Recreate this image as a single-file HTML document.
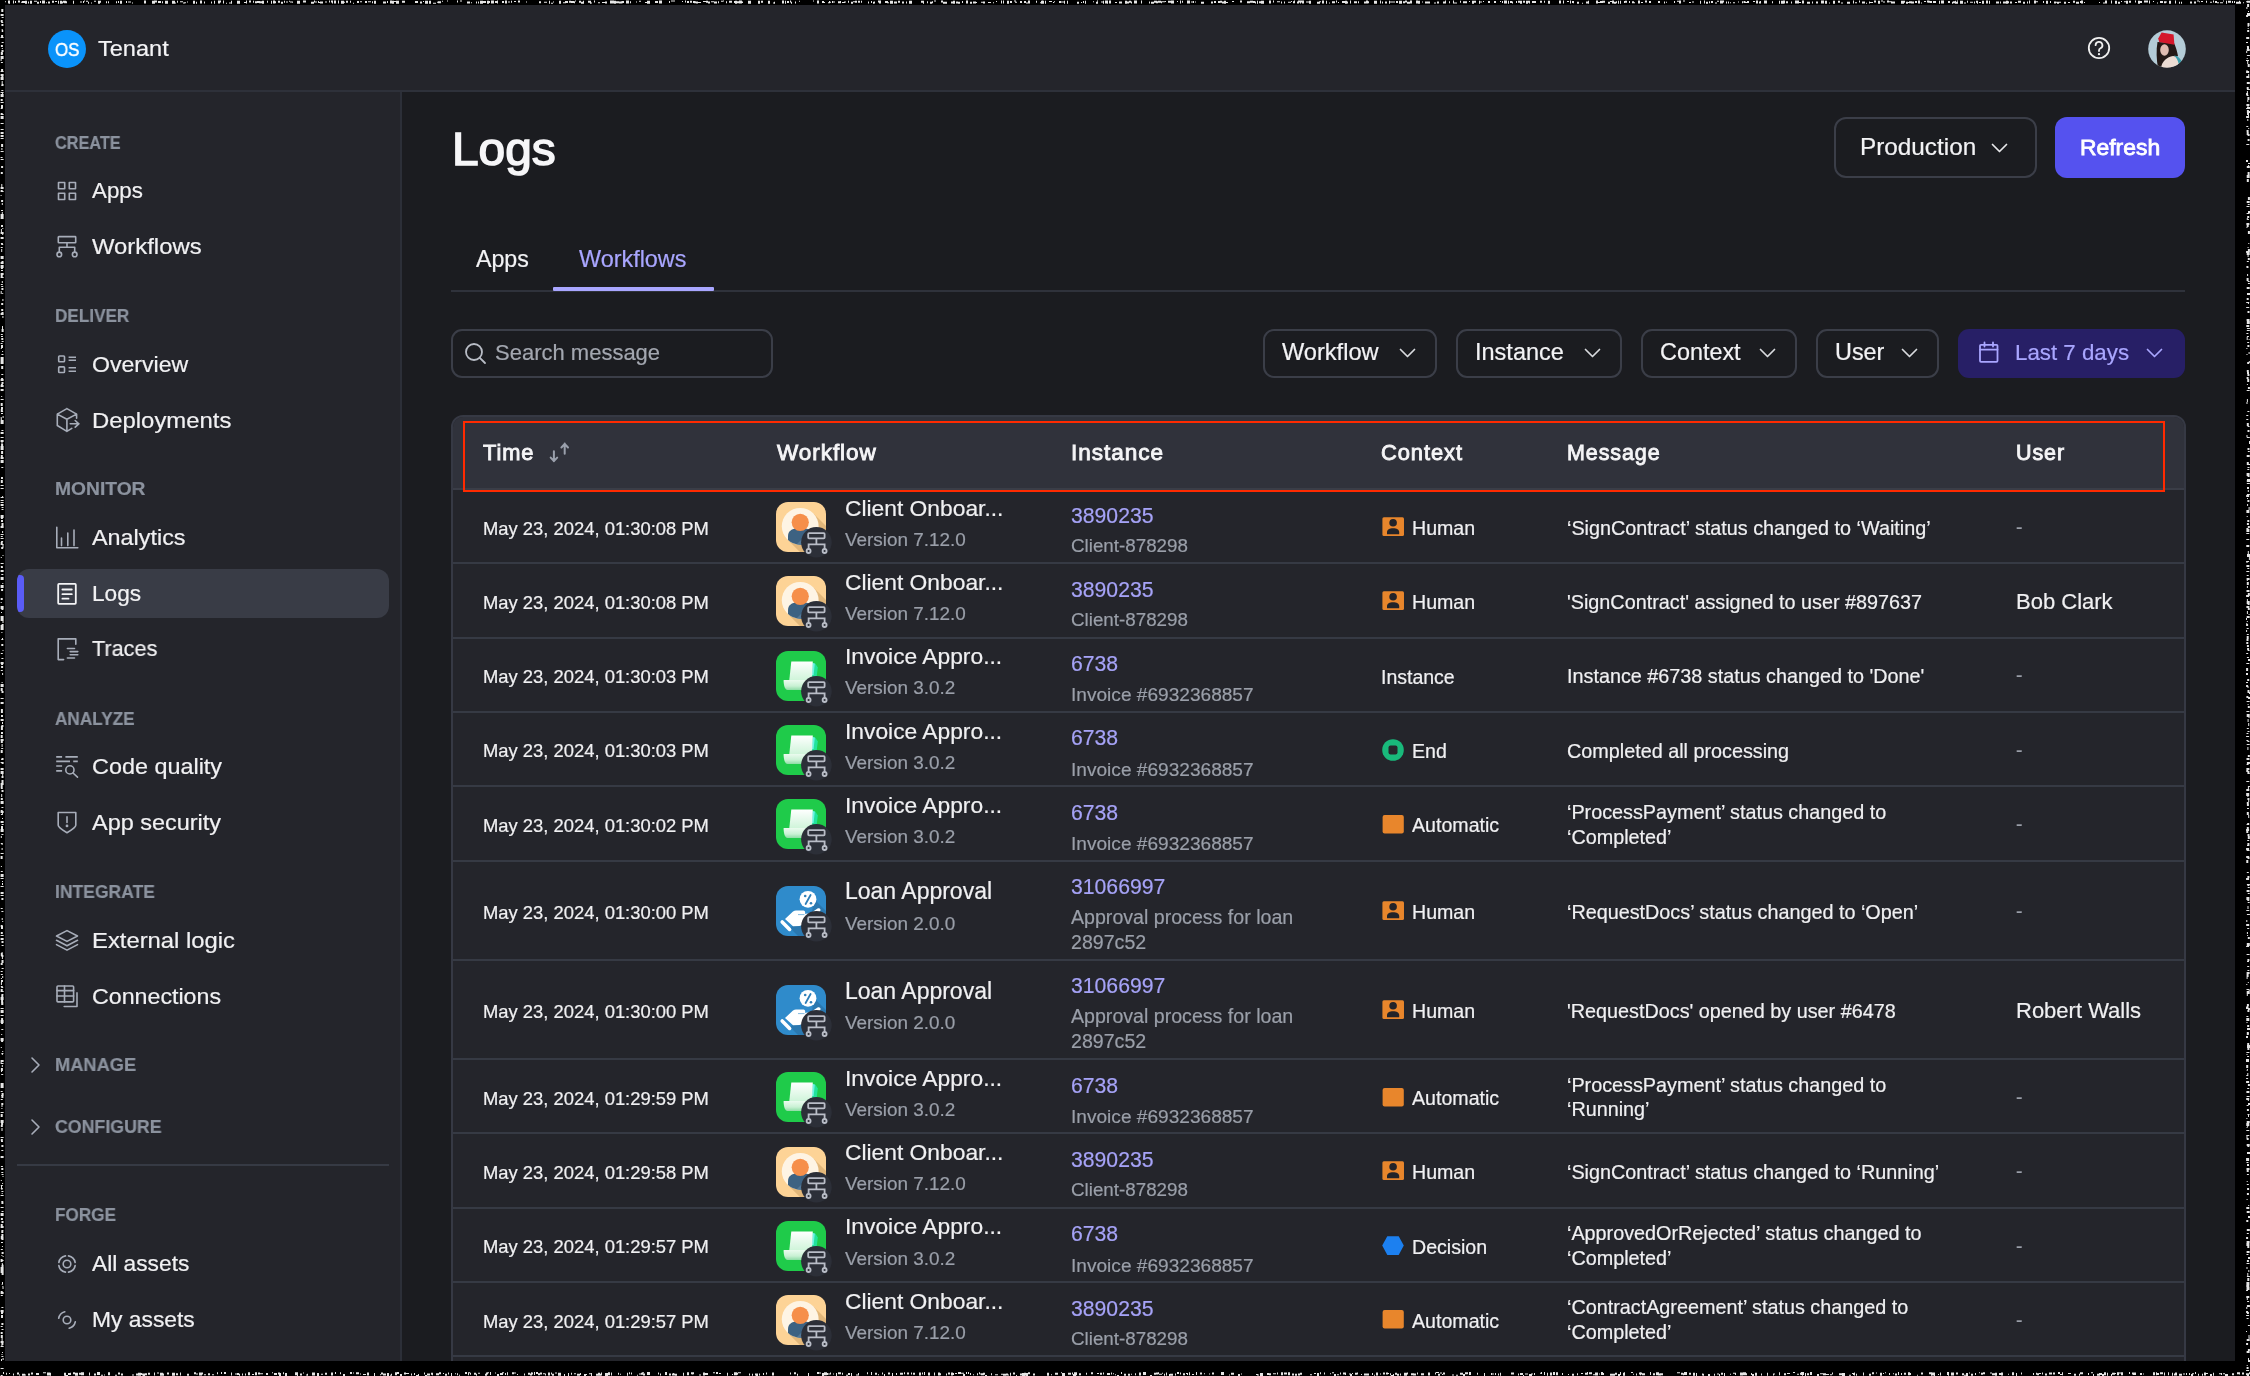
<!DOCTYPE html><html><head><meta charset="utf-8"><style>
html,body{margin:0;padding:0;width:2250px;height:1376px;overflow:hidden;background:#000;}
body{position:relative;font-family:"Liberation Sans", sans-serif;}
.t{position:absolute;line-height:1;white-space:nowrap;will-change:transform;-webkit-text-stroke:0.2px currentColor;}
svg{overflow:visible}
</style></head><body>
<div style="position:absolute;left:5px;top:5px;width:2230px;height:1356px;background:#1b1c20"></div>
<div style="position:absolute;left:5px;top:5px;width:2230px;height:85px;background:#24252b"></div>
<div style="position:absolute;left:5px;top:90px;width:2230px;height:2px;background:#2e313a"></div>
<div style="position:absolute;left:5px;top:92px;width:395px;height:1269px;background:#24252b"></div>
<div style="position:absolute;left:400px;top:92px;width:2px;height:1269px;background:#2c2f38"></div>
<div style="position:absolute;left:48px;top:29.5px;width:38px;height:38px;background:#0a93fa;border-radius:50%"></div>
<div class="t" style="left:55px;top:40.22px;font-size:19px;color:#ffffff;transform:scaleX(0.89);transform-origin:0 0;-webkit-text-stroke:0.5px #ffffff">OS</div>
<div class="t" style="left:98px;top:38.15px;font-size:21.8px;color:#f4f4f6;transform:scaleX(1.08);transform-origin:0 0;">Tenant</div>
<svg style="position:absolute;left:2086px;top:35px;" width="26" height="26" viewBox="0 0 26 26"><circle cx="13" cy="13" r="10.2" fill="none" stroke="#f0f0f0" stroke-width="1.8"/><path d="M9.6 10.2a3.4 3.4 0 1 1 4.9 3.1c-.9.5-1.5 1-1.5 2.1v.6" fill="none" stroke="#f0f0f0" stroke-width="1.8" stroke-linecap="round"/><circle cx="13" cy="19.2" r="1.15" fill="#f0f0f0"/></svg>
<svg style="position:absolute;left:2148px;top:29.6px;" width="38" height="38" viewBox="0 0 38 38"><defs><clipPath id="av"><circle cx="19" cy="19" r="18.8"/></clipPath></defs>
<g clip-path="url(#av)"><rect width="38" height="38" fill="#b4ccd7"/>
<path d="M9.5 12 C8 20 8.5 30 10 38 L24 38 C24 32 27 27 30 26 C29 20 27 15 26 13Z" fill="#231916"/>
<ellipse cx="16.5" cy="20" rx="4.3" ry="5.8" fill="#dfbcb0"/>
<path d="M13 38 C14 31 19 27 25 26 C29 26 31 29 32 33 L32 38Z" fill="#ecdcd3"/>
<path d="M26 25.5 C30 26 33 29 35 34 L35 38 L31 38 C31 32 29 28 26 25.5Z" fill="#3a9fad"/>
<path d="M10.2 8.6 L13.6 2.4 L25.6 4.4 L26.4 14.8 L11.2 12 Z" fill="#d4182b"/>
</g></svg>
<div style="position:absolute;left:17px;top:569px;width:372px;height:49px;background:#393c46;border-radius:12px;overflow:hidden"></div>
<div style="position:absolute;left:17px;top:569px;width:372px;height:49px;border-radius:12px;overflow:hidden"><div style="position:absolute;left:0;top:6px;width:7px;height:37px;background:#5a5cf6;border-radius:2px 4px 4px 2px"></div></div>
<div class="t" style="left:55px;top:133.54px;font-size:18.5px;color:#8b929e;font-weight:700;transform:scaleX(0.88);transform-origin:0 0;">CREATE</div>
<svg style="position:absolute;left:57px;top:181px;" width="20" height="20" viewBox="0 0 20 20"><g fill="none" stroke="#a7adb9" stroke-width="1.6" stroke-linecap="round" stroke-linejoin="round"><rect x="1.5" y="1.5" width="6.2" height="6.2"/><rect x="12.3" y="1.5" width="6.2" height="6.2"/><rect x="1.5" y="12.3" width="6.2" height="6.2"/><rect x="12.3" y="12.3" width="6.2" height="6.2"/></g></svg>
<div class="t" style="left:92px;top:180.22px;font-size:22.3px;color:#f1f1f3;transform:scaleX(1.001);transform-origin:0 0;">Apps</div>
<svg style="position:absolute;left:55px;top:235px;" width="24" height="24" viewBox="0 0 24 24"><g fill="none" stroke="#a7adb9" stroke-width="1.6" stroke-linecap="round" stroke-linejoin="round"><rect x="3.3" y="1.6" width="17.4" height="6.2" rx="0.6"/><path d="M12 7.8v4.4M4.3 12.2h15.4v4.8M4.3 12.2v4.8"/><circle cx="4.3" cy="19.4" r="2.3"/><circle cx="19.7" cy="19.4" r="2.3"/></g></svg>
<div class="t" style="left:92px;top:236.02px;font-size:22.3px;color:#f1f1f3;transform:scaleX(1.07);transform-origin:0 0;">Workflows</div>
<div class="t" style="left:55px;top:307.14px;font-size:18.5px;color:#8b929e;font-weight:700;transform:scaleX(0.927);transform-origin:0 0;">DELIVER</div>
<svg style="position:absolute;left:56px;top:354px;" width="21" height="21" viewBox="0 0 21 21"><g fill="none" stroke="#a7adb9" stroke-width="1.6" stroke-linecap="round" stroke-linejoin="round"><rect x="2.7" y="2" width="5.8" height="5.8" rx="0.8"/><rect x="2.7" y="12.9" width="5.8" height="5.6" rx="0.8"/><path d="M12.6 3.3h7.4M12.6 6.3h7.4M12.6 13.8h7.4M12.6 17.3h7.4" stroke-linecap="butt"/></g></svg>
<div class="t" style="left:92px;top:353.62px;font-size:22.3px;color:#f1f1f3;transform:scaleX(1.035);transform-origin:0 0;">Overview</div>
<svg style="position:absolute;left:56px;top:407px;" width="26" height="26" viewBox="0 0 26 26"><g fill="none" stroke="#a7adb9" stroke-width="1.6" stroke-linecap="round" stroke-linejoin="round"><path d="M10.9 1.6 L20.6 7.1 V11.3 M10.9 1.6 L1.3 7.1 V18.5 L10.9 24.4 L15.8 21.4 M1.3 7.1 L10.9 12.3 L20.6 7.1 M10.9 12.3 V24.4"/><path d="M14.2 16.8h8.8M19.2 13.5l3.6 3.3-3.6 3.4"/></g></svg>
<div class="t" style="left:92px;top:409.72px;font-size:22.3px;color:#f1f1f3;transform:scaleX(1.071);transform-origin:0 0;">Deployments</div>
<div class="t" style="left:55px;top:480.44px;font-size:18.5px;color:#8b929e;font-weight:700;transform:scaleX(1.04);transform-origin:0 0;">MONITOR</div>
<svg style="position:absolute;left:55px;top:526px;" width="24" height="24" viewBox="0 0 24 24"><g fill="none" stroke="#a7adb9" stroke-width="1.6" stroke-linecap="round" stroke-linejoin="round"><path d="M1.8 1.2V21.8H22.8M6.5 19.6V12M12.8 19.6V7.1M19 19.6V4.1"/></g></svg>
<div class="t" style="left:92px;top:527.02px;font-size:22.3px;color:#f1f1f3;transform:scaleX(1.048);transform-origin:0 0;">Analytics</div>
<svg style="position:absolute;left:56px;top:582px;" width="21" height="23" viewBox="0 0 21 23"><g fill="none" stroke="#f4f4f6" stroke-width="1.8" stroke-linecap="round" stroke-linejoin="round"><rect x="2.2" y="1.9" width="17.6" height="19.9" rx="0.8"/><path d="M6.4 7.5h9.4M6.4 12.2h9.4M6.4 16.7h6.1"/></g></svg>
<div class="t" style="left:92px;top:582.92px;font-size:22.3px;color:#f1f1f3;transform:scaleX(1.017);transform-origin:0 0;">Logs</div>
<svg style="position:absolute;left:56px;top:637px;" width="24" height="24" viewBox="0 0 24 24"><g fill="none" stroke="#a7adb9" stroke-width="1.6" stroke-linecap="round" stroke-linejoin="round"><path d="M19.8 7.3V1.9H2.2V22.6h5.4"/><path d="M11.4 11.5h7.1M14.2 14.6h7.6M14.2 17.8h7.6M11.4 21h7.1"/></g></svg>
<div class="t" style="left:92px;top:638.12px;font-size:22.3px;color:#f1f1f3;transform:scaleX(0.971);transform-origin:0 0;">Traces</div>
<div class="t" style="left:55px;top:709.64px;font-size:18.5px;color:#8b929e;font-weight:700;transform:scaleX(0.93);transform-origin:0 0;">ANALYZE</div>
<svg style="position:absolute;left:55px;top:754px;" width="24" height="24" viewBox="0 0 24 24"><g fill="none" stroke="#a7adb9" stroke-width="1.6" stroke-linecap="round" stroke-linejoin="round"><path d="M1.2 2.9H7.1M10.4 2.9H22.8M1.2 7.4H15M18.2 7.4H22.8M1.2 12H7.1M1.2 16.9H7.1" stroke-linecap="butt"/><circle cx="14.9" cy="15.9" r="4.1"/><path d="M18 19L22.5 23.1"/></g></svg>
<div class="t" style="left:92px;top:756.22px;font-size:22.3px;color:#f1f1f3;transform:scaleX(1.049);transform-origin:0 0;">Code quality</div>
<svg style="position:absolute;left:55px;top:811px;" width="23" height="23" viewBox="0 0 23 23"><g fill="none" stroke="#a7adb9" stroke-width="1.6" stroke-linecap="round" stroke-linejoin="round"><path d="M3.2 1.5H20.8V14.2C20.8 16 19 17.5 12 21.7C5 17.5 3.2 16 3.2 14.2Z"/><path d="M12 5.9v5.5"/><circle cx="12" cy="14.9" r="0.6" fill="#a7adb9"/></g></svg>
<div class="t" style="left:92px;top:812.32px;font-size:22.3px;color:#f1f1f3;transform:scaleX(1.052);transform-origin:0 0;">App security</div>
<div class="t" style="left:55px;top:882.84px;font-size:18.5px;color:#8b929e;font-weight:700;transform:scaleX(0.946);transform-origin:0 0;">INTEGRATE</div>
<svg style="position:absolute;left:55px;top:929px;" width="24" height="23" viewBox="0 0 24 23"><g fill="none" stroke="#a7adb9" stroke-width="1.6" stroke-linecap="round" stroke-linejoin="round"><path d="M12 1.6 L22.5 7 L12 12.4 L1.5 7 Z"/><path d="M1.5 11.3 L12 16.8 L22.5 11.3"/><path d="M1.5 15.6 L12 21.1 L22.5 15.6"/></g></svg>
<div class="t" style="left:92px;top:929.72px;font-size:22.3px;color:#f1f1f3;transform:scaleX(1.068);transform-origin:0 0;">External logic</div>
<svg style="position:absolute;left:55px;top:985px;" width="24" height="23" viewBox="0 0 24 23"><g fill="none" stroke="#a7adb9" stroke-width="1.6" stroke-linecap="round" stroke-linejoin="round"><rect x="2" y="1" width="16.6" height="15.9" rx="1"/><path d="M2 5.6h16.6M2 11h16.6M9.5 1v15.9"/><path d="M22 7.9V21.5H9.2"/></g></svg>
<div class="t" style="left:92px;top:985.52px;font-size:22.3px;color:#f1f1f3;transform:scaleX(1.041);transform-origin:0 0;">Connections</div>
<svg style="position:absolute;left:29px;top:1056px;" width="14" height="18" viewBox="0 0 14 18"><path d="M3 2l7 7-7 7" fill="none" stroke="#a7adb9" stroke-width="1.6" stroke-linecap="round" stroke-linejoin="round"/></svg>
<div class="t" style="left:55px;top:1056.34px;font-size:18.5px;color:#8b929e;font-weight:700;transform:scaleX(0.986);transform-origin:0 0;">MANAGE</div>
<svg style="position:absolute;left:29px;top:1118px;" width="14" height="18" viewBox="0 0 14 18"><path d="M3 2l7 7-7 7" fill="none" stroke="#a7adb9" stroke-width="1.6" stroke-linecap="round" stroke-linejoin="round"/></svg>
<div class="t" style="left:55px;top:1118.44px;font-size:18.5px;color:#8b929e;font-weight:700;transform:scaleX(0.96);transform-origin:0 0;">CONFIGURE</div>
<div style="position:absolute;left:17px;top:1163.5px;width:372px;height:2px;background:#363a44"></div>
<div class="t" style="left:55px;top:1206.14px;font-size:18.5px;color:#8b929e;font-weight:700;transform:scaleX(0.927);transform-origin:0 0;">FORGE</div>
<svg style="position:absolute;left:55px;top:1253px;" width="24" height="22" viewBox="0 0 24 22"><g fill="none" stroke="#a7adb9" stroke-width="1.6" stroke-linecap="round" stroke-linejoin="round"><circle cx="12" cy="11" r="3.8"/><path d="M20.16 9.49A8.3 8.3 0 0 0 13.51 2.84M10.49 2.84A8.3 8.3 0 0 0 3.84 9.49M3.84 12.51A8.3 8.3 0 0 0 10.49 19.16M13.51 19.16A8.3 8.3 0 0 0 20.16 12.51"/></g></svg>
<div class="t" style="left:92px;top:1253.32px;font-size:22.3px;color:#f1f1f3;transform:scaleX(1.02);transform-origin:0 0;">All assets</div>
<svg style="position:absolute;left:55px;top:1309px;" width="24" height="22" viewBox="0 0 24 22"><g fill="none" stroke="#a7adb9" stroke-width="1.6" stroke-linecap="round" stroke-linejoin="round"><circle cx="12" cy="11" r="3.8"/><path d="M9.8 2.79A8.5 8.5 0 0 0 3.69 9.23M14.2 19.21A8.5 8.5 0 0 0 20.31 12.77"/></g></svg>
<div class="t" style="left:92px;top:1309.02px;font-size:22.3px;color:#f1f1f3;transform:scaleX(1.024);transform-origin:0 0;">My assets</div>
<div class="t" style="left:451.6px;top:126.36px;font-size:46px;color:#f6f6f8;transform:scaleX(1.04);transform-origin:0 0;-webkit-text-stroke:1.5px #f6f6f8">Logs</div>
<div style="position:absolute;left:1834px;top:117px;width:203px;height:61px;box-sizing:border-box;border:2px solid #3b3e48;border-radius:12px"></div>
<div class="t" style="left:1859.5px;top:135.13px;font-size:24.3px;color:#f3f3f5;">Production</div>
<svg style="position:absolute;left:1991px;top:143px;" width="17" height="10" viewBox="0 0 17 10"><path d="M1.5 1.5l7 7 7-7" fill="none" stroke="#e8e8ea" stroke-width="1.7" stroke-linecap="round" stroke-linejoin="round"/></svg>
<div style="position:absolute;left:2055px;top:117px;width:130px;height:61px;background:#5552ef;border-radius:12px"></div>
<div class="t" style="left:2079.6px;top:136.78px;font-size:22px;color:#ffffff;transform:scaleX(1.04);transform-origin:0 0;-webkit-text-stroke:0.8px #ffffff">Refresh</div>
<div class="t" style="left:476px;top:247.86px;font-size:23.2px;color:#f3f3f5;">Apps</div>
<div class="t" style="left:578.7px;top:247.69px;font-size:23.4px;color:#a9a6ff;">Workflows</div>
<div style="position:absolute;left:451px;top:290px;width:1734px;height:2px;background:#2f323b"></div>
<div style="position:absolute;left:553px;top:286.5px;width:161px;height:4px;background:#a9a6ff;border-radius:1px"></div>
<div style="position:absolute;left:451px;top:329px;width:322px;height:49px;box-sizing:border-box;border:2px solid #3b3e48;border-radius:11px"></div>
<svg style="position:absolute;left:463px;top:341px;" width="26" height="26" viewBox="0 0 26 26"><circle cx="11" cy="11" r="8" fill="none" stroke="#b9bdc6" stroke-width="1.8"/><path d="M16.8 16.8l5.2 5.2" stroke="#b9bdc6" stroke-width="1.8" stroke-linecap="round"/></svg>
<div class="t" style="left:494.7px;top:342.38px;font-size:22px;color:#a3a7b0;">Search message</div>
<div style="position:absolute;left:1263px;top:329px;width:174px;height:49px;box-sizing:border-box;border:2px solid #3b3e48;border-radius:11px"></div>
<div class="t" style="left:1281.6px;top:341.02px;font-size:23.6px;color:#f3f3f5;">Workflow</div>
<svg style="position:absolute;left:1398.5px;top:348px;" width="17" height="10" viewBox="0 0 17 10"><path d="M1.5 1.5l7 7 7-7" fill="none" stroke="#d8dade" stroke-width="1.7" stroke-linecap="round" stroke-linejoin="round"/></svg>
<div style="position:absolute;left:1456px;top:329px;width:166px;height:49px;box-sizing:border-box;border:2px solid #3b3e48;border-radius:11px"></div>
<div class="t" style="left:1474.6px;top:341.11px;font-size:23.5px;color:#f3f3f5;">Instance</div>
<svg style="position:absolute;left:1583.5px;top:348px;" width="17" height="10" viewBox="0 0 17 10"><path d="M1.5 1.5l7 7 7-7" fill="none" stroke="#d8dade" stroke-width="1.7" stroke-linecap="round" stroke-linejoin="round"/></svg>
<div style="position:absolute;left:1641px;top:329px;width:156px;height:49px;box-sizing:border-box;border:2px solid #3b3e48;border-radius:11px"></div>
<div class="t" style="left:1659.6px;top:341.19px;font-size:23.4px;color:#f3f3f5;">Context</div>
<svg style="position:absolute;left:1758.5px;top:348px;" width="17" height="10" viewBox="0 0 17 10"><path d="M1.5 1.5l7 7 7-7" fill="none" stroke="#d8dade" stroke-width="1.7" stroke-linecap="round" stroke-linejoin="round"/></svg>
<div style="position:absolute;left:1816px;top:329px;width:123px;height:49px;box-sizing:border-box;border:2px solid #3b3e48;border-radius:11px"></div>
<div class="t" style="left:1834.6px;top:341.19px;font-size:23.4px;color:#f3f3f5;">User</div>
<svg style="position:absolute;left:1900.5px;top:348px;" width="17" height="10" viewBox="0 0 17 10"><path d="M1.5 1.5l7 7 7-7" fill="none" stroke="#d8dade" stroke-width="1.7" stroke-linecap="round" stroke-linejoin="round"/></svg>
<div style="position:absolute;left:1958px;top:329px;width:227px;height:49px;background:#271f66;border-radius:11px"></div>
<svg style="position:absolute;left:1978px;top:341px;" width="22" height="23" viewBox="0 0 22 23"><rect x="2" y="3.8" width="17.5" height="17" rx="1" fill="none" stroke="#a9a6ff" stroke-width="1.8"/><path d="M2 8.6h17.5M6.5 1.5v4M15 1.5v4" stroke="#a9a6ff" stroke-width="1.8" stroke-linecap="round"/></svg>
<div class="t" style="left:2014.6px;top:342.12px;font-size:22.3px;color:#a9a6ff;">Last 7 days</div>
<svg style="position:absolute;left:2146px;top:348px;" width="17" height="10" viewBox="0 0 17 10"><path d="M1.5 1.5l7 7 7-7" fill="none" stroke="#a9a6ff" stroke-width="1.7" stroke-linecap="round" stroke-linejoin="round"/></svg>
<div style="position:absolute;left:451px;top:415px;width:1734.5px;height:990px;box-sizing:border-box;border:2px solid #363944;border-radius:12px;background:#24252b;overflow:hidden"><div style="position:absolute;left:0;top:0;right:0;height:71px;background:#30323b"></div><div style="position:absolute;left:0;top:71px;right:0;height:2px;background:#3a3d47"></div></div>
<div class="t" style="left:482.5px;top:442.80px;font-size:21.5px;color:#f5f5f7;transform:scaleX(1.016);transform-origin:0 0;-webkit-text-stroke:0.85px #f5f5f7;letter-spacing:0.9px">Time</div>
<svg style="position:absolute;left:545px;top:440px;" width="28" height="24" viewBox="0 0 28 24"><path d="M8.9 11.3v9.9M5.7 17.6l3.2 3.4 3.3-3.4M19.7 13.8V3.4M16.4 7.5l3.3-3.5 3.3 3.5" fill="none" stroke="#9aa0ac" stroke-width="2" stroke-linecap="round" stroke-linejoin="round"/></svg>
<div class="t" style="left:776.5px;top:442.80px;font-size:21.5px;color:#f5f5f7;transform:scaleX(1.047);transform-origin:0 0;-webkit-text-stroke:0.85px #f5f5f7;letter-spacing:0.9px">Workflow</div>
<div class="t" style="left:1070.8px;top:442.80px;font-size:21.5px;color:#f5f5f7;transform:scaleX(1.05);transform-origin:0 0;-webkit-text-stroke:0.85px #f5f5f7;letter-spacing:0.9px">Instance</div>
<div class="t" style="left:1380.9px;top:442.80px;font-size:21.5px;color:#f5f5f7;transform:scaleX(1.019);transform-origin:0 0;-webkit-text-stroke:0.85px #f5f5f7;letter-spacing:0.9px">Context</div>
<div class="t" style="left:1566.5px;top:442.80px;font-size:21.5px;color:#f5f5f7;transform:scaleX(1.0);transform-origin:0 0;-webkit-text-stroke:0.85px #f5f5f7;letter-spacing:0.9px">Message</div>
<div class="t" style="left:2016px;top:442.80px;font-size:21.5px;color:#f5f5f7;transform:scaleX(0.994);transform-origin:0 0;-webkit-text-stroke:0.85px #f5f5f7;letter-spacing:0.9px">User</div>
<div class="t" style="left:482.8px;top:519.57px;font-size:18.4px;color:#f0f0f2;">May 23, 2024, 01:30:08 PM</div>
<svg style="position:absolute;left:776px;top:502.1px;" width="50" height="50" viewBox="0 0 50 50"><defs><clipPath id="cc"><rect width="50" height="50" rx="12"/></clipPath><clipPath id="cb"><circle cx="24.2" cy="24.3" r="18.4"/></clipPath></defs><g clip-path="url(#cc)"><rect width="50" height="50" fill="#fdd396"/><path d="M37.2 11.3 L63 37 L37 63 L11.2 37.3Z" fill="#e2b77a"/><circle cx="24.2" cy="24.3" r="18.4" fill="#fef4e4"/><g clip-path="url(#cb)"><path d="M12 46 V34 C12 29 16 26.5 21 26.5 H28 C33 26.5 37 29 37 34 V46Z" fill="#3d6282"/><path d="M17 46 L37 26 L40 46Z" fill="#527897"/></g><circle cx="24.25" cy="20.3" r="8.6" fill="#f68f4a"/></g><circle cx="40.4" cy="40.3" r="15.3" fill="#2c2f38"/><g fill="none" stroke="#b9bdc7" stroke-width="1.8"><rect x="32.2" y="31.2" width="16.4" height="5.2" rx="0.8"/><path d="M40.4 36.4v5.9M32.6 47v-4.7h16v4.7"/><circle cx="32.6" cy="49" r="2"/><circle cx="48.6" cy="49" r="2"/></g></svg>
<div class="t" style="left:845.2px;top:496.65px;font-size:22.8px;color:#f0f0f2;">Client Onboar...</div>
<div class="t" style="left:845px;top:530.85px;font-size:18.9px;color:#9a9fa9;">Version 7.12.0</div>
<div class="t" style="left:1070.7px;top:504.55px;font-size:21.2px;color:#a6a3f7;">3890235</div>
<div class="t" style="left:1070.7px;top:537.09px;font-size:18.8px;color:#9a9fa9;">Client-878298</div>
<svg style="position:absolute;left:1381.5px;top:517.05px;" width="22" height="19.2" viewBox="0 0 22 19.2"><rect x="0.4" y="0.3" width="21.6" height="18.8" rx="1.5" fill="#e8862c"/><circle cx="11.1" cy="5.8" r="3.8" fill="#222329"/><path d="M5 17.3 V15.2 C5 12.6 7.5 11.2 11.1 11.2 C14.7 11.2 17.2 12.6 17.2 15.2 V17.3Z" fill="#222329"/></svg>
<div class="t" style="left:1412px;top:518.86px;font-size:19.6px;color:#f0f0f2;">Human</div>
<div class="t" style="left:1566.5px;top:518.79px;font-size:19.8px;color:#f0f0f2;">&#8216;SignContract&#8217; status changed to &#8216;Waiting&#8217;</div>
<div class="t" style="left:2016px;top:517.84px;font-size:19.5px;color:#9a9fa9;">-</div>
<div style="position:absolute;left:453px;top:562.3px;width:1731px;height:2px;background:#363a44"></div>
<div class="t" style="left:482.8px;top:593.87px;font-size:18.4px;color:#f0f0f2;">May 23, 2024, 01:30:08 PM</div>
<svg style="position:absolute;left:776px;top:576.4px;" width="50" height="50" viewBox="0 0 50 50"><defs><clipPath id="cc"><rect width="50" height="50" rx="12"/></clipPath><clipPath id="cb"><circle cx="24.2" cy="24.3" r="18.4"/></clipPath></defs><g clip-path="url(#cc)"><rect width="50" height="50" fill="#fdd396"/><path d="M37.2 11.3 L63 37 L37 63 L11.2 37.3Z" fill="#e2b77a"/><circle cx="24.2" cy="24.3" r="18.4" fill="#fef4e4"/><g clip-path="url(#cb)"><path d="M12 46 V34 C12 29 16 26.5 21 26.5 H28 C33 26.5 37 29 37 34 V46Z" fill="#3d6282"/><path d="M17 46 L37 26 L40 46Z" fill="#527897"/></g><circle cx="24.25" cy="20.3" r="8.6" fill="#f68f4a"/></g><circle cx="40.4" cy="40.3" r="15.3" fill="#2c2f38"/><g fill="none" stroke="#b9bdc7" stroke-width="1.8"><rect x="32.2" y="31.2" width="16.4" height="5.2" rx="0.8"/><path d="M40.4 36.4v5.9M32.6 47v-4.7h16v4.7"/><circle cx="32.6" cy="49" r="2"/><circle cx="48.6" cy="49" r="2"/></g></svg>
<div class="t" style="left:845.2px;top:570.95px;font-size:22.8px;color:#f0f0f2;">Client Onboar...</div>
<div class="t" style="left:845px;top:605.15px;font-size:18.9px;color:#9a9fa9;">Version 7.12.0</div>
<div class="t" style="left:1070.7px;top:578.85px;font-size:21.2px;color:#a6a3f7;">3890235</div>
<div class="t" style="left:1070.7px;top:611.39px;font-size:18.8px;color:#9a9fa9;">Client-878298</div>
<svg style="position:absolute;left:1381.5px;top:591.3499999999999px;" width="22" height="19.2" viewBox="0 0 22 19.2"><rect x="0.4" y="0.3" width="21.6" height="18.8" rx="1.5" fill="#e8862c"/><circle cx="11.1" cy="5.8" r="3.8" fill="#222329"/><path d="M5 17.3 V15.2 C5 12.6 7.5 11.2 11.1 11.2 C14.7 11.2 17.2 12.6 17.2 15.2 V17.3Z" fill="#222329"/></svg>
<div class="t" style="left:1412px;top:593.16px;font-size:19.6px;color:#f0f0f2;">Human</div>
<div class="t" style="left:1566.5px;top:593.09px;font-size:19.8px;color:#f0f0f2;">'SignContract' assigned to user #897637</div>
<div class="t" style="left:2016px;top:590.73px;font-size:22px;color:#f0f0f2;">Bob Clark</div>
<div style="position:absolute;left:453px;top:636.6px;width:1731px;height:2px;background:#363a44"></div>
<div class="t" style="left:482.8px;top:668.17px;font-size:18.4px;color:#f0f0f2;">May 23, 2024, 01:30:03 PM</div>
<svg style="position:absolute;left:776px;top:650.7px;" width="50" height="50" viewBox="0 0 50 50"><defs><linearGradient id="pg" x1="0" y1="0" x2="0" y2="1"><stop offset="0" stop-color="#ffffff"/><stop offset="1" stop-color="#cdf4d8"/></linearGradient><linearGradient id="rg" x1="0" y1="0" x2="0" y2="1"><stop offset="0" stop-color="#ebfbef"/><stop offset="0.6" stop-color="#c9f1d4"/><stop offset="1" stop-color="#8fdca6"/></linearGradient><clipPath id="ci"><rect width="50" height="50" rx="12"/></clipPath></defs><g clip-path="url(#ci)"><rect width="50" height="50" fill="#1fcb4a"/><path d="M36.5 12 L39.5 12.8 L41.8 16.5 L40.2 30 L35.5 30Z" fill="#22e39b"/><path d="M36.5 12 L38.8 12.6 L37.6 24 L36 24Z" fill="#6ff2e6"/><path d="M15.3 10.4 H36.8 L35.9 30 H13.2Z" fill="url(#pg)"/><path d="M7.6 29.05 H36 V39 H11.5 C9 39 7.6 35 7.6 29.05Z" fill="url(#rg)"/></g><circle cx="40.4" cy="40.3" r="15.3" fill="#2c2f38"/><g fill="none" stroke="#b9bdc7" stroke-width="1.8"><rect x="32.2" y="31.2" width="16.4" height="5.2" rx="0.8"/><path d="M40.4 36.4v5.9M32.6 47v-4.7h16v4.7"/><circle cx="32.6" cy="49" r="2"/><circle cx="48.6" cy="49" r="2"/></g></svg>
<div class="t" style="left:845.2px;top:645.25px;font-size:22.8px;color:#f0f0f2;">Invoice Appro...</div>
<div class="t" style="left:845px;top:679.45px;font-size:18.9px;color:#9a9fa9;">Version 3.0.2</div>
<div class="t" style="left:1070.7px;top:653.15px;font-size:21.2px;color:#a6a3f7;">6738</div>
<div class="t" style="left:1070.7px;top:685.43px;font-size:19.1px;color:#9a9fa9;">Invoice #6932368857</div>
<div class="t" style="left:1380.5px;top:667.54px;font-size:19.5px;color:#f0f0f2;">Instance</div>
<div class="t" style="left:1566.5px;top:667.39px;font-size:19.8px;color:#f0f0f2;">Instance #6738 status changed to 'Done'</div>
<div class="t" style="left:2016px;top:666.44px;font-size:19.5px;color:#9a9fa9;">-</div>
<div style="position:absolute;left:453px;top:710.9px;width:1731px;height:2px;background:#363a44"></div>
<div class="t" style="left:482.8px;top:742.47px;font-size:18.4px;color:#f0f0f2;">May 23, 2024, 01:30:03 PM</div>
<svg style="position:absolute;left:776px;top:725.0px;" width="50" height="50" viewBox="0 0 50 50"><defs><linearGradient id="pg" x1="0" y1="0" x2="0" y2="1"><stop offset="0" stop-color="#ffffff"/><stop offset="1" stop-color="#cdf4d8"/></linearGradient><linearGradient id="rg" x1="0" y1="0" x2="0" y2="1"><stop offset="0" stop-color="#ebfbef"/><stop offset="0.6" stop-color="#c9f1d4"/><stop offset="1" stop-color="#8fdca6"/></linearGradient><clipPath id="ci"><rect width="50" height="50" rx="12"/></clipPath></defs><g clip-path="url(#ci)"><rect width="50" height="50" fill="#1fcb4a"/><path d="M36.5 12 L39.5 12.8 L41.8 16.5 L40.2 30 L35.5 30Z" fill="#22e39b"/><path d="M36.5 12 L38.8 12.6 L37.6 24 L36 24Z" fill="#6ff2e6"/><path d="M15.3 10.4 H36.8 L35.9 30 H13.2Z" fill="url(#pg)"/><path d="M7.6 29.05 H36 V39 H11.5 C9 39 7.6 35 7.6 29.05Z" fill="url(#rg)"/></g><circle cx="40.4" cy="40.3" r="15.3" fill="#2c2f38"/><g fill="none" stroke="#b9bdc7" stroke-width="1.8"><rect x="32.2" y="31.2" width="16.4" height="5.2" rx="0.8"/><path d="M40.4 36.4v5.9M32.6 47v-4.7h16v4.7"/><circle cx="32.6" cy="49" r="2"/><circle cx="48.6" cy="49" r="2"/></g></svg>
<div class="t" style="left:845.2px;top:719.55px;font-size:22.8px;color:#f0f0f2;">Invoice Appro...</div>
<div class="t" style="left:845px;top:753.75px;font-size:18.9px;color:#9a9fa9;">Version 3.0.2</div>
<div class="t" style="left:1070.7px;top:727.45px;font-size:21.2px;color:#a6a3f7;">6738</div>
<div class="t" style="left:1070.7px;top:759.73px;font-size:19.1px;color:#9a9fa9;">Invoice #6932368857</div>
<svg style="position:absolute;left:1381.5px;top:738.5499999999998px;" width="22" height="22" viewBox="0 0 22 22"><circle cx="11" cy="11" r="10.8" fill="#19b97b"/><rect x="6.5" y="6.5" width="9" height="9" rx="2" fill="#26272c"/></svg>
<div class="t" style="left:1412px;top:741.76px;font-size:19.6px;color:#f0f0f2;">End</div>
<div class="t" style="left:1566.5px;top:741.69px;font-size:19.8px;color:#f0f0f2;">Completed all processing</div>
<div class="t" style="left:2016px;top:740.74px;font-size:19.5px;color:#9a9fa9;">-</div>
<div style="position:absolute;left:453px;top:785.2px;width:1731px;height:2px;background:#363a44"></div>
<div class="t" style="left:482.8px;top:816.77px;font-size:18.4px;color:#f0f0f2;">May 23, 2024, 01:30:02 PM</div>
<svg style="position:absolute;left:776px;top:799.3px;" width="50" height="50" viewBox="0 0 50 50"><defs><linearGradient id="pg" x1="0" y1="0" x2="0" y2="1"><stop offset="0" stop-color="#ffffff"/><stop offset="1" stop-color="#cdf4d8"/></linearGradient><linearGradient id="rg" x1="0" y1="0" x2="0" y2="1"><stop offset="0" stop-color="#ebfbef"/><stop offset="0.6" stop-color="#c9f1d4"/><stop offset="1" stop-color="#8fdca6"/></linearGradient><clipPath id="ci"><rect width="50" height="50" rx="12"/></clipPath></defs><g clip-path="url(#ci)"><rect width="50" height="50" fill="#1fcb4a"/><path d="M36.5 12 L39.5 12.8 L41.8 16.5 L40.2 30 L35.5 30Z" fill="#22e39b"/><path d="M36.5 12 L38.8 12.6 L37.6 24 L36 24Z" fill="#6ff2e6"/><path d="M15.3 10.4 H36.8 L35.9 30 H13.2Z" fill="url(#pg)"/><path d="M7.6 29.05 H36 V39 H11.5 C9 39 7.6 35 7.6 29.05Z" fill="url(#rg)"/></g><circle cx="40.4" cy="40.3" r="15.3" fill="#2c2f38"/><g fill="none" stroke="#b9bdc7" stroke-width="1.8"><rect x="32.2" y="31.2" width="16.4" height="5.2" rx="0.8"/><path d="M40.4 36.4v5.9M32.6 47v-4.7h16v4.7"/><circle cx="32.6" cy="49" r="2"/><circle cx="48.6" cy="49" r="2"/></g></svg>
<div class="t" style="left:845.2px;top:793.85px;font-size:22.8px;color:#f0f0f2;">Invoice Appro...</div>
<div class="t" style="left:845px;top:828.05px;font-size:18.9px;color:#9a9fa9;">Version 3.0.2</div>
<div class="t" style="left:1070.7px;top:801.75px;font-size:21.2px;color:#a6a3f7;">6738</div>
<div class="t" style="left:1070.7px;top:834.03px;font-size:19.1px;color:#9a9fa9;">Invoice #6932368857</div>
<svg style="position:absolute;left:1381.5px;top:814.6499999999997px;" width="22" height="18.4" viewBox="0 0 22 18.4"><rect x="0.6" y="0" width="21.2" height="18.4" rx="2" fill="#e8862c"/></svg>
<div class="t" style="left:1412px;top:816.06px;font-size:19.6px;color:#f0f0f2;">Automatic</div>
<div class="t" style="left:1566.5px;top:802.69px;font-size:19.8px;color:#f0f0f2;">&#8216;ProcessPayment&#8217; status changed to</div>
<div class="t" style="left:1566.5px;top:827.59px;font-size:19.8px;color:#f0f0f2;">&#8216;Completed&#8217;</div>
<div class="t" style="left:2016px;top:815.04px;font-size:19.5px;color:#9a9fa9;">-</div>
<div style="position:absolute;left:453px;top:859.5px;width:1731px;height:2px;background:#363a44"></div>
<div class="t" style="left:482.8px;top:903.57px;font-size:18.4px;color:#f0f0f2;">May 23, 2024, 01:30:00 PM</div>
<svg style="position:absolute;left:776px;top:886.1px;" width="50" height="50" viewBox="0 0 50 50"><defs><clipPath id="cl"><rect width="50" height="50" rx="12"/></clipPath></defs><g clip-path="url(#cl)"><rect width="50" height="50" fill="#2f8bcb"/><path d="M38 13 L50 25 L50 50 L22 50 L14 42 L36 26Z" fill="#2a78b0"/><circle cx="32" cy="13.3" r="8.4" fill="#ffffff"/><path d="M34.6 9 L29.6 18" stroke="#2f7fb8" stroke-width="1.8" stroke-linecap="round"/><circle cx="29.2" cy="10" r="1.3" fill="#2f7fb8"/><circle cx="35" cy="17.2" r="1.3" fill="#2f7fb8"/><path d="M9 33 L17 25.5 C18 24.8 19 24.5 20 24.5 L27.5 24.5 C29.8 24.5 29.8 28.6 27.5 28.6 L22 28.6 L34.5 27.2 L41.5 22.6 C43.5 21.4 45.6 23.4 44 25.2 L35 36 L23.5 40 L17 40.2 Z" fill="#ffffff"/><path d="M22 28.6 H28.5" stroke="#2f8bcb" stroke-width="0.6"/><path d="M6.2 36 L13.6 43.4" stroke="#ffffff" stroke-width="3.6" stroke-linecap="round"/></g><circle cx="40.4" cy="40.3" r="15.3" fill="#2c2f38"/><g fill="none" stroke="#b9bdc7" stroke-width="1.8"><rect x="32.2" y="31.2" width="16.4" height="5.2" rx="0.8"/><path d="M40.4 36.4v5.9M32.6 47v-4.7h16v4.7"/><circle cx="32.6" cy="49" r="2"/><circle cx="48.6" cy="49" r="2"/></g></svg>
<div class="t" style="left:845.2px;top:880.48px;font-size:23.0px;color:#f0f0f2;">Loan Approval</div>
<div class="t" style="left:845px;top:914.85px;font-size:18.9px;color:#9a9fa9;">Version 2.0.0</div>
<div class="t" style="left:1070.7px;top:876.05px;font-size:21.2px;color:#a6a3f7;">31066997</div>
<div class="t" style="left:1070.7px;top:907.91px;font-size:19.6px;color:#9a9fa9;">Approval process for loan</div>
<div class="t" style="left:1070.7px;top:932.91px;font-size:19.6px;color:#9a9fa9;">2897c52</div>
<svg style="position:absolute;left:1381.5px;top:901.0499999999997px;" width="22" height="19.2" viewBox="0 0 22 19.2"><rect x="0.4" y="0.3" width="21.6" height="18.8" rx="1.5" fill="#e8862c"/><circle cx="11.1" cy="5.8" r="3.8" fill="#222329"/><path d="M5 17.3 V15.2 C5 12.6 7.5 11.2 11.1 11.2 C14.7 11.2 17.2 12.6 17.2 15.2 V17.3Z" fill="#222329"/></svg>
<div class="t" style="left:1412px;top:902.86px;font-size:19.6px;color:#f0f0f2;">Human</div>
<div class="t" style="left:1566.5px;top:902.79px;font-size:19.8px;color:#f0f0f2;">&#8216;RequestDocs&#8217; status changed to &#8216;Open&#8217;</div>
<div class="t" style="left:2016px;top:901.84px;font-size:19.5px;color:#9a9fa9;">-</div>
<div style="position:absolute;left:453px;top:958.8px;width:1731px;height:2px;background:#363a44"></div>
<div class="t" style="left:482.8px;top:1002.87px;font-size:18.4px;color:#f0f0f2;">May 23, 2024, 01:30:00 PM</div>
<svg style="position:absolute;left:776px;top:985.4px;" width="50" height="50" viewBox="0 0 50 50"><defs><clipPath id="cl"><rect width="50" height="50" rx="12"/></clipPath></defs><g clip-path="url(#cl)"><rect width="50" height="50" fill="#2f8bcb"/><path d="M38 13 L50 25 L50 50 L22 50 L14 42 L36 26Z" fill="#2a78b0"/><circle cx="32" cy="13.3" r="8.4" fill="#ffffff"/><path d="M34.6 9 L29.6 18" stroke="#2f7fb8" stroke-width="1.8" stroke-linecap="round"/><circle cx="29.2" cy="10" r="1.3" fill="#2f7fb8"/><circle cx="35" cy="17.2" r="1.3" fill="#2f7fb8"/><path d="M9 33 L17 25.5 C18 24.8 19 24.5 20 24.5 L27.5 24.5 C29.8 24.5 29.8 28.6 27.5 28.6 L22 28.6 L34.5 27.2 L41.5 22.6 C43.5 21.4 45.6 23.4 44 25.2 L35 36 L23.5 40 L17 40.2 Z" fill="#ffffff"/><path d="M22 28.6 H28.5" stroke="#2f8bcb" stroke-width="0.6"/><path d="M6.2 36 L13.6 43.4" stroke="#ffffff" stroke-width="3.6" stroke-linecap="round"/></g><circle cx="40.4" cy="40.3" r="15.3" fill="#2c2f38"/><g fill="none" stroke="#b9bdc7" stroke-width="1.8"><rect x="32.2" y="31.2" width="16.4" height="5.2" rx="0.8"/><path d="M40.4 36.4v5.9M32.6 47v-4.7h16v4.7"/><circle cx="32.6" cy="49" r="2"/><circle cx="48.6" cy="49" r="2"/></g></svg>
<div class="t" style="left:845.2px;top:979.78px;font-size:23.0px;color:#f0f0f2;">Loan Approval</div>
<div class="t" style="left:845px;top:1014.15px;font-size:18.9px;color:#9a9fa9;">Version 2.0.0</div>
<div class="t" style="left:1070.7px;top:975.35px;font-size:21.2px;color:#a6a3f7;">31066997</div>
<div class="t" style="left:1070.7px;top:1007.21px;font-size:19.6px;color:#9a9fa9;">Approval process for loan</div>
<div class="t" style="left:1070.7px;top:1032.21px;font-size:19.6px;color:#9a9fa9;">2897c52</div>
<svg style="position:absolute;left:1381.5px;top:1000.3499999999997px;" width="22" height="19.2" viewBox="0 0 22 19.2"><rect x="0.4" y="0.3" width="21.6" height="18.8" rx="1.5" fill="#e8862c"/><circle cx="11.1" cy="5.8" r="3.8" fill="#222329"/><path d="M5 17.3 V15.2 C5 12.6 7.5 11.2 11.1 11.2 C14.7 11.2 17.2 12.6 17.2 15.2 V17.3Z" fill="#222329"/></svg>
<div class="t" style="left:1412px;top:1002.16px;font-size:19.6px;color:#f0f0f2;">Human</div>
<div class="t" style="left:1566.5px;top:1002.09px;font-size:19.8px;color:#f0f0f2;">'RequestDocs' opened by user #6478</div>
<div class="t" style="left:2016px;top:999.73px;font-size:22px;color:#f0f0f2;">Robert Walls</div>
<div style="position:absolute;left:453px;top:1058.1px;width:1731px;height:2px;background:#363a44"></div>
<div class="t" style="left:482.8px;top:1089.67px;font-size:18.4px;color:#f0f0f2;">May 23, 2024, 01:29:59 PM</div>
<svg style="position:absolute;left:776px;top:1072.2px;" width="50" height="50" viewBox="0 0 50 50"><defs><linearGradient id="pg" x1="0" y1="0" x2="0" y2="1"><stop offset="0" stop-color="#ffffff"/><stop offset="1" stop-color="#cdf4d8"/></linearGradient><linearGradient id="rg" x1="0" y1="0" x2="0" y2="1"><stop offset="0" stop-color="#ebfbef"/><stop offset="0.6" stop-color="#c9f1d4"/><stop offset="1" stop-color="#8fdca6"/></linearGradient><clipPath id="ci"><rect width="50" height="50" rx="12"/></clipPath></defs><g clip-path="url(#ci)"><rect width="50" height="50" fill="#1fcb4a"/><path d="M36.5 12 L39.5 12.8 L41.8 16.5 L40.2 30 L35.5 30Z" fill="#22e39b"/><path d="M36.5 12 L38.8 12.6 L37.6 24 L36 24Z" fill="#6ff2e6"/><path d="M15.3 10.4 H36.8 L35.9 30 H13.2Z" fill="url(#pg)"/><path d="M7.6 29.05 H36 V39 H11.5 C9 39 7.6 35 7.6 29.05Z" fill="url(#rg)"/></g><circle cx="40.4" cy="40.3" r="15.3" fill="#2c2f38"/><g fill="none" stroke="#b9bdc7" stroke-width="1.8"><rect x="32.2" y="31.2" width="16.4" height="5.2" rx="0.8"/><path d="M40.4 36.4v5.9M32.6 47v-4.7h16v4.7"/><circle cx="32.6" cy="49" r="2"/><circle cx="48.6" cy="49" r="2"/></g></svg>
<div class="t" style="left:845.2px;top:1066.75px;font-size:22.8px;color:#f0f0f2;">Invoice Appro...</div>
<div class="t" style="left:845px;top:1100.95px;font-size:18.9px;color:#9a9fa9;">Version 3.0.2</div>
<div class="t" style="left:1070.7px;top:1074.65px;font-size:21.2px;color:#a6a3f7;">6738</div>
<div class="t" style="left:1070.7px;top:1106.93px;font-size:19.1px;color:#9a9fa9;">Invoice #6932368857</div>
<svg style="position:absolute;left:1381.5px;top:1087.5499999999995px;" width="22" height="18.4" viewBox="0 0 22 18.4"><rect x="0.6" y="0" width="21.2" height="18.4" rx="2" fill="#e8862c"/></svg>
<div class="t" style="left:1412px;top:1088.96px;font-size:19.6px;color:#f0f0f2;">Automatic</div>
<div class="t" style="left:1566.5px;top:1075.59px;font-size:19.8px;color:#f0f0f2;">&#8216;ProcessPayment&#8217; status changed to</div>
<div class="t" style="left:1566.5px;top:1100.49px;font-size:19.8px;color:#f0f0f2;">&#8216;Running&#8217;</div>
<div class="t" style="left:2016px;top:1087.94px;font-size:19.5px;color:#9a9fa9;">-</div>
<div style="position:absolute;left:453px;top:1132.4px;width:1731px;height:2px;background:#363a44"></div>
<div class="t" style="left:482.8px;top:1163.97px;font-size:18.4px;color:#f0f0f2;">May 23, 2024, 01:29:58 PM</div>
<svg style="position:absolute;left:776px;top:1146.5px;" width="50" height="50" viewBox="0 0 50 50"><defs><clipPath id="cc"><rect width="50" height="50" rx="12"/></clipPath><clipPath id="cb"><circle cx="24.2" cy="24.3" r="18.4"/></clipPath></defs><g clip-path="url(#cc)"><rect width="50" height="50" fill="#fdd396"/><path d="M37.2 11.3 L63 37 L37 63 L11.2 37.3Z" fill="#e2b77a"/><circle cx="24.2" cy="24.3" r="18.4" fill="#fef4e4"/><g clip-path="url(#cb)"><path d="M12 46 V34 C12 29 16 26.5 21 26.5 H28 C33 26.5 37 29 37 34 V46Z" fill="#3d6282"/><path d="M17 46 L37 26 L40 46Z" fill="#527897"/></g><circle cx="24.25" cy="20.3" r="8.6" fill="#f68f4a"/></g><circle cx="40.4" cy="40.3" r="15.3" fill="#2c2f38"/><g fill="none" stroke="#b9bdc7" stroke-width="1.8"><rect x="32.2" y="31.2" width="16.4" height="5.2" rx="0.8"/><path d="M40.4 36.4v5.9M32.6 47v-4.7h16v4.7"/><circle cx="32.6" cy="49" r="2"/><circle cx="48.6" cy="49" r="2"/></g></svg>
<div class="t" style="left:845.2px;top:1141.05px;font-size:22.8px;color:#f0f0f2;">Client Onboar...</div>
<div class="t" style="left:845px;top:1175.25px;font-size:18.9px;color:#9a9fa9;">Version 7.12.0</div>
<div class="t" style="left:1070.7px;top:1148.95px;font-size:21.2px;color:#a6a3f7;">3890235</div>
<div class="t" style="left:1070.7px;top:1181.49px;font-size:18.8px;color:#9a9fa9;">Client-878298</div>
<svg style="position:absolute;left:1381.5px;top:1161.4499999999998px;" width="22" height="19.2" viewBox="0 0 22 19.2"><rect x="0.4" y="0.3" width="21.6" height="18.8" rx="1.5" fill="#e8862c"/><circle cx="11.1" cy="5.8" r="3.8" fill="#222329"/><path d="M5 17.3 V15.2 C5 12.6 7.5 11.2 11.1 11.2 C14.7 11.2 17.2 12.6 17.2 15.2 V17.3Z" fill="#222329"/></svg>
<div class="t" style="left:1412px;top:1163.26px;font-size:19.6px;color:#f0f0f2;">Human</div>
<div class="t" style="left:1566.5px;top:1163.19px;font-size:19.8px;color:#f0f0f2;">&#8216;SignContract&#8217; status changed to &#8216;Running&#8217;</div>
<div class="t" style="left:2016px;top:1162.24px;font-size:19.5px;color:#9a9fa9;">-</div>
<div style="position:absolute;left:453px;top:1206.7px;width:1731px;height:2px;background:#363a44"></div>
<div class="t" style="left:482.8px;top:1238.27px;font-size:18.4px;color:#f0f0f2;">May 23, 2024, 01:29:57 PM</div>
<svg style="position:absolute;left:776px;top:1220.8px;" width="50" height="50" viewBox="0 0 50 50"><defs><linearGradient id="pg" x1="0" y1="0" x2="0" y2="1"><stop offset="0" stop-color="#ffffff"/><stop offset="1" stop-color="#cdf4d8"/></linearGradient><linearGradient id="rg" x1="0" y1="0" x2="0" y2="1"><stop offset="0" stop-color="#ebfbef"/><stop offset="0.6" stop-color="#c9f1d4"/><stop offset="1" stop-color="#8fdca6"/></linearGradient><clipPath id="ci"><rect width="50" height="50" rx="12"/></clipPath></defs><g clip-path="url(#ci)"><rect width="50" height="50" fill="#1fcb4a"/><path d="M36.5 12 L39.5 12.8 L41.8 16.5 L40.2 30 L35.5 30Z" fill="#22e39b"/><path d="M36.5 12 L38.8 12.6 L37.6 24 L36 24Z" fill="#6ff2e6"/><path d="M15.3 10.4 H36.8 L35.9 30 H13.2Z" fill="url(#pg)"/><path d="M7.6 29.05 H36 V39 H11.5 C9 39 7.6 35 7.6 29.05Z" fill="url(#rg)"/></g><circle cx="40.4" cy="40.3" r="15.3" fill="#2c2f38"/><g fill="none" stroke="#b9bdc7" stroke-width="1.8"><rect x="32.2" y="31.2" width="16.4" height="5.2" rx="0.8"/><path d="M40.4 36.4v5.9M32.6 47v-4.7h16v4.7"/><circle cx="32.6" cy="49" r="2"/><circle cx="48.6" cy="49" r="2"/></g></svg>
<div class="t" style="left:845.2px;top:1215.35px;font-size:22.8px;color:#f0f0f2;">Invoice Appro...</div>
<div class="t" style="left:845px;top:1249.55px;font-size:18.9px;color:#9a9fa9;">Version 3.0.2</div>
<div class="t" style="left:1070.7px;top:1223.25px;font-size:21.2px;color:#a6a3f7;">6738</div>
<div class="t" style="left:1070.7px;top:1255.53px;font-size:19.1px;color:#9a9fa9;">Invoice #6932368857</div>
<svg style="position:absolute;left:1381.5px;top:1235.7499999999995px;" width="22" height="19.2" viewBox="0 0 22 19.2"><path d="M5.3 0.2 H16.7 L21.8 9.6 L16.7 19 H5.3 L0.2 9.6Z" fill="#1c80f0"/></svg>
<div class="t" style="left:1412px;top:1237.56px;font-size:19.6px;color:#f0f0f2;">Decision</div>
<div class="t" style="left:1566.5px;top:1224.19px;font-size:19.8px;color:#f0f0f2;">&#8216;ApprovedOrRejected&#8217; status changed to</div>
<div class="t" style="left:1566.5px;top:1249.09px;font-size:19.8px;color:#f0f0f2;">&#8216;Completed&#8217;</div>
<div class="t" style="left:2016px;top:1236.54px;font-size:19.5px;color:#9a9fa9;">-</div>
<div style="position:absolute;left:453px;top:1281.0px;width:1731px;height:2px;background:#363a44"></div>
<div class="t" style="left:482.8px;top:1312.57px;font-size:18.4px;color:#f0f0f2;">May 23, 2024, 01:29:57 PM</div>
<svg style="position:absolute;left:776px;top:1295.1px;" width="50" height="50" viewBox="0 0 50 50"><defs><clipPath id="cc"><rect width="50" height="50" rx="12"/></clipPath><clipPath id="cb"><circle cx="24.2" cy="24.3" r="18.4"/></clipPath></defs><g clip-path="url(#cc)"><rect width="50" height="50" fill="#fdd396"/><path d="M37.2 11.3 L63 37 L37 63 L11.2 37.3Z" fill="#e2b77a"/><circle cx="24.2" cy="24.3" r="18.4" fill="#fef4e4"/><g clip-path="url(#cb)"><path d="M12 46 V34 C12 29 16 26.5 21 26.5 H28 C33 26.5 37 29 37 34 V46Z" fill="#3d6282"/><path d="M17 46 L37 26 L40 46Z" fill="#527897"/></g><circle cx="24.25" cy="20.3" r="8.6" fill="#f68f4a"/></g><circle cx="40.4" cy="40.3" r="15.3" fill="#2c2f38"/><g fill="none" stroke="#b9bdc7" stroke-width="1.8"><rect x="32.2" y="31.2" width="16.4" height="5.2" rx="0.8"/><path d="M40.4 36.4v5.9M32.6 47v-4.7h16v4.7"/><circle cx="32.6" cy="49" r="2"/><circle cx="48.6" cy="49" r="2"/></g></svg>
<div class="t" style="left:845.2px;top:1289.65px;font-size:22.8px;color:#f0f0f2;">Client Onboar...</div>
<div class="t" style="left:845px;top:1323.85px;font-size:18.9px;color:#9a9fa9;">Version 7.12.0</div>
<div class="t" style="left:1070.7px;top:1297.55px;font-size:21.2px;color:#a6a3f7;">3890235</div>
<div class="t" style="left:1070.7px;top:1330.09px;font-size:18.8px;color:#9a9fa9;">Client-878298</div>
<svg style="position:absolute;left:1381.5px;top:1310.4499999999996px;" width="22" height="18.4" viewBox="0 0 22 18.4"><rect x="0.6" y="0" width="21.2" height="18.4" rx="2" fill="#e8862c"/></svg>
<div class="t" style="left:1412px;top:1311.86px;font-size:19.6px;color:#f0f0f2;">Automatic</div>
<div class="t" style="left:1566.5px;top:1298.49px;font-size:19.8px;color:#f0f0f2;">&#8216;ContractAgreement&#8217; status changed to</div>
<div class="t" style="left:1566.5px;top:1323.39px;font-size:19.8px;color:#f0f0f2;">&#8216;Completed&#8217;</div>
<div class="t" style="left:2016px;top:1310.84px;font-size:19.5px;color:#9a9fa9;">-</div>
<div style="position:absolute;left:453px;top:1355.3px;width:1731px;height:2px;background:#363a44"></div>
<div style="position:absolute;left:463px;top:421px;width:1702px;height:71px;box-sizing:border-box;border:2.2px solid #ff2a00"></div>
<div style="position:absolute;left:0px;top:1361px;width:2250px;height:15px;background:#000"></div>
<div style="position:absolute;left:2235px;top:0px;width:15px;height:1376px;background:#000"></div>
<svg style="position:absolute;left:0;top:0" width="2250" height="1376"><path fill="#e6e6e6" d="M5 1.3h1v1h-1zM8 0.5h2v3h-2zM9 2.7h1v1h-1zM13 0.5h1v3h-1zM15 1.0h1v2h-1zM18 0.6h2v2h-2zM21 1.8h2v1h-2zM22 1.1h3v2h-3zM25 0.7h2v3h-2zM28 1.4h1v2h-1zM30 0.8h2v3h-2zM34 0.8h3v1h-3zM37 1.7h2v2h-2zM40 0.9h1v2h-1zM42 0.5h3v3h-3zM46 2.2h1v1h-1zM48 1.4h2v2h-2zM52 0.7h2v2h-2zM53 0.7h1v2h-1zM55 0.9h2v1h-2zM58 0.8h1v3h-1zM60 0.8h2v3h-2zM62 1.4h1v2h-1zM63 0.8h3v2h-3zM64 1.3h3v2h-3zM73 0.8h1v3h-1zM80 1.6h2v1h-2zM83 1.1h1v2h-1zM84 0.5h1v1h-1zM86 0.7h2v1h-2zM88 1.7h1v2h-1zM91 2.5h1v1h-1zM94 0.8h2v1h-2zM98 0.7h2v3h-2zM100 0.7h1v2h-1zM106 1.2h1v2h-1zM108 1.3h1v2h-1zM116 1.2h1v2h-1zM118 1.1h1v2h-1zM120 0.7h2v3h-2zM126 1.1h1v2h-1zM128 1.6h3v1h-3zM132 2.6h1v1h-1zM144 0.6h2v3h-2zM145 0.5h1v2h-1zM152 0.7h3v3h-3zM154 0.5h3v2h-3zM158 1.1h3v2h-3zM162 1.2h1v2h-1zM165 0.8h3v3h-3zM172 0.7h3v3h-3zM175 2.5h1v1h-1zM177 0.7h1v2h-1zM180 1.2h3v1h-3zM183 2.5h2v1h-2zM184 2.3h2v1h-2zM187 1.5h1v1h-1zM193 0.7h2v3h-2zM196 1.7h1v2h-1zM200 0.6h2v3h-2zM204 1.4h1v2h-1zM211 1.6h1v2h-1zM214 0.8h1v3h-1zM218 0.6h2v3h-2zM220 0.5h1v2h-1zM223 0.6h1v3h-1zM226 2.8h1v1h-1zM229 2.6h2v1h-2zM231 0.8h1v3h-1zM237 0.7h3v3h-3zM238 0.8h1v3h-1zM244 1.9h2v1h-2zM246 0.5h1v3h-1zM249 0.6h2v2h-2zM253 0.8h1v2h-1zM255 1.2h2v2h-2zM257 0.9h3v2h-3zM259 1.2h3v2h-3zM262 0.7h2v3h-2zM267 0.8h1v2h-1zM271 0.8h1v3h-1zM273 0.5h2v3h-2zM274 1.3h2v2h-2zM278 0.7h2v2h-2zM281 1.8h2v2h-2zM284 0.8h1v2h-1zM286 1.6h2v1h-2zM289 0.7h1v1h-1zM290 1.4h3v1h-3zM292 1.8h1v1h-1zM297 0.7h3v3h-3zM303 0.6h3v2h-3zM311 1.7h3v2h-3zM314 0.6h1v2h-1zM315 1.4h2v1h-2zM318 1.1h1v2h-1zM319 2.0h1v1h-1zM320 1.6h2v2h-2zM322 1.5h1v2h-1zM325 1.6h2v1h-2zM329 0.6h1v2h-1zM331 0.5h2v2h-2zM332 1.4h1v2h-1zM334 0.6h2v3h-2zM338 0.5h1v3h-1zM341 0.8h3v3h-3zM344 1.8h1v1h-1zM346 0.7h2v2h-2zM350 0.8h1v2h-1zM353 2.7h1v1h-1zM357 1.0h2v2h-2zM360 1.2h2v1h-2zM365 1.0h2v2h-2zM368 1.3h3v1h-3zM372 1.3h1v2h-1zM374 0.7h2v3h-2zM383 1.4h3v2h-3zM387 1.1h1v2h-1zM390 0.6h2v3h-2zM392 0.7h2v3h-2zM394 0.9h2v1h-2zM396 0.7h3v3h-3zM402 0.8h3v2h-3zM404 0.8h1v2h-1zM415 1.0h3v2h-3zM420 1.4h2v2h-2zM423 1.1h1v1h-1zM425 0.8h2v3h-2zM426 0.8h2v3h-2zM429 0.8h2v3h-2zM433 2.7h3v1h-3zM437 1.8h2v1h-2zM438 1.2h1v2h-1zM439 1.3h2v2h-2zM442 0.7h1v1h-1zM447 0.5h1v1h-1zM457 0.5h1v2h-1zM460 0.6h2v1h-2zM467 1.4h2v2h-2zM469 1.4h1v2h-1zM471 2.3h1v1h-1zM476 1.5h1v2h-1zM478 1.5h1v2h-1zM480 0.7h3v3h-3zM482 1.7h1v2h-1zM483 1.0h3v2h-3zM487 0.8h2v3h-2zM489 0.9h1v2h-1zM491 0.5h3v3h-3zM495 1.1h2v2h-2zM496 1.3h2v1h-2zM497 0.6h1v3h-1zM502 1.0h2v2h-2zM505 0.5h2v3h-2zM508 1.4h2v1h-2zM511 0.8h1v2h-1zM514 1.1h2v1h-2zM518 0.5h2v2h-2zM526 1.6h1v1h-1zM539 1.3h2v2h-2zM544 1.7h3v1h-3zM549 0.7h1v3h-1zM551 2.8h2v1h-2zM553 1.5h1v1h-1zM559 0.7h2v3h-2zM563 2.3h3v1h-3zM565 1.0h3v2h-3zM569 0.7h2v2h-2zM571 0.9h3v2h-3zM574 1.3h1v2h-1zM575 0.5h1v1h-1zM579 0.7h2v2h-2zM581 1.7h3v2h-3zM583 0.7h1v3h-1zM588 0.8h3v2h-3zM590 1.8h1v2h-1zM591 2.4h1v1h-1zM594 0.6h1v2h-1zM598 2.3h2v1h-2zM602 2.0h3v1h-3zM605 1.4h2v2h-2zM610 0.6h2v3h-2zM612 0.6h2v3h-2zM613 0.5h1v3h-1zM614 0.7h2v3h-2zM616 1.3h3v2h-3zM619 1.5h3v2h-3zM621 1.2h2v2h-2zM622 0.9h2v2h-2zM626 0.5h3v3h-3zM630 1.3h1v2h-1zM636 1.4h1v1h-1zM639 0.8h2v1h-2zM645 2.0h3v1h-3zM647 0.7h3v3h-3zM655 1.1h3v2h-3zM659 0.6h3v3h-3zM660 0.6h2v3h-2zM669 1.0h1v2h-1zM671 0.6h2v1h-2zM673 0.6h2v1h-2zM682 0.9h1v1h-1zM685 0.6h1v2h-1zM687 0.9h2v2h-2zM690 0.8h2v2h-2zM693 0.9h2v2h-2zM694 1.3h2v2h-2zM696 1.5h2v2h-2zM698 2.0h3v1h-3zM703 1.1h3v1h-3zM706 0.8h2v2h-2zM708 1.5h2v2h-2zM711 1.2h3v1h-3zM714 1.5h3v2h-3zM718 1.3h1v2h-1zM721 0.8h2v1h-2zM723 0.6h1v1h-1zM726 1.2h1v2h-1zM729 0.8h3v2h-3zM734 1.1h1v2h-1zM735 0.7h2v3h-2zM736 1.3h3v2h-3zM739 0.6h3v3h-3zM740 1.4h3v1h-3zM742 1.9h1v1h-1zM748 0.7h3v3h-3zM750 1.3h1v2h-1zM758 0.7h2v3h-2zM761 0.8h2v2h-2zM762 1.3h1v1h-1zM768 0.7h2v3h-2zM773 2.5h1v1h-1zM774 1.7h1v2h-1zM782 0.6h2v3h-2zM785 0.8h1v3h-1zM787 1.0h2v2h-2zM790 0.5h1v2h-1zM791 1.8h1v2h-1zM795 1.4h1v2h-1zM799 0.7h1v1h-1zM813 0.6h1v1h-1zM817 0.5h2v3h-2zM822 1.1h2v2h-2zM823 2.1h2v1h-2zM828 2.3h2v1h-2zM829 1.1h1v2h-1zM830 1.8h1v1h-1zM832 0.9h1v2h-1zM833 1.6h2v1h-2zM838 1.3h3v2h-3zM840 1.1h1v2h-1zM842 1.9h3v1h-3zM844 1.5h2v1h-2zM848 0.8h1v2h-1zM851 1.7h2v2h-2zM853 1.3h3v1h-3zM855 0.7h2v2h-2zM858 0.7h2v2h-2zM861 0.8h1v2h-1zM868 1.4h1v2h-1zM871 0.9h1v2h-1zM873 1.8h1v2h-1zM874 1.5h1v2h-1zM878 0.6h2v2h-2zM879 0.5h2v3h-2zM885 1.1h3v2h-3zM887 2.2h2v1h-2zM890 0.8h3v3h-3zM894 1.4h3v2h-3zM898 0.8h2v2h-2zM902 1.5h2v2h-2zM906 1.6h1v2h-1zM909 0.7h3v3h-3zM921 0.7h3v2h-3zM923 0.7h1v3h-1zM927 1.2h1v2h-1zM930 1.8h2v2h-2zM932 1.3h1v2h-1zM934 0.5h2v1h-2zM941 0.6h2v2h-2zM943 1.8h3v2h-3zM946 1.7h1v2h-1zM951 1.6h3v2h-3zM953 0.8h2v3h-2zM956 1.5h2v2h-2zM958 1.8h2v2h-2zM962 1.0h1v2h-1zM966 0.6h2v3h-2zM970 1.7h2v2h-2zM973 1.5h3v2h-3zM975 2.0h2v1h-2zM981 1.8h3v1h-3zM983 1.5h2v2h-2zM988 2.0h3v1h-3zM993 2.2h1v1h-1zM996 1.1h1v1h-1zM1001 0.6h1v3h-1zM1003 0.5h1v3h-1zM1007 0.7h2v3h-2zM1010 1.1h2v2h-2zM1014 0.5h2v1h-2zM1015 1.7h2v1h-2zM1020 0.9h2v2h-2zM1024 0.9h2v2h-2zM1026 2.4h3v1h-3zM1028 0.6h2v3h-2zM1036 0.8h1v2h-1zM1040 2.3h3v1h-3zM1041 0.7h3v3h-3zM1042 0.6h1v1h-1zM1045 0.7h1v3h-1zM1049 1.0h3v1h-3zM1053 2.0h1v1h-1zM1054 1.3h1v1h-1zM1059 1.0h2v2h-2zM1061 1.6h3v1h-3zM1064 0.7h1v3h-1zM1067 0.7h1v3h-1zM1077 1.7h2v2h-2zM1081 2.1h1v1h-1zM1083 1.1h1v2h-1zM1085 0.7h1v3h-1zM1093 1.2h1v1h-1zM1096 1.7h2v2h-2zM1097 0.5h1v1h-1zM1101 1.4h3v1h-3zM1103 0.7h1v3h-1zM1105 0.6h3v3h-3zM1107 1.7h1v2h-1zM1109 0.6h2v3h-2zM1115 1.9h2v1h-2zM1119 1.6h3v2h-3zM1125 0.8h2v3h-2zM1127 1.5h2v2h-2zM1129 0.8h2v2h-2zM1131 1.6h1v2h-1zM1134 0.6h3v3h-3zM1135 0.6h2v3h-2zM1141 0.6h1v3h-1zM1149 1.5h1v2h-1zM1151 1.7h3v2h-3zM1154 0.7h3v2h-3zM1156 1.3h2v2h-2zM1158 0.8h3v2h-3zM1161 1.3h1v2h-1zM1162 1.3h3v1h-3zM1165 1.0h1v1h-1zM1168 0.8h3v2h-3zM1170 0.8h2v2h-2zM1171 0.5h1v3h-1zM1172 0.6h2v3h-2zM1177 1.1h1v1h-1zM1180 0.6h1v3h-1zM1182 0.7h1v2h-1zM1187 0.5h3v3h-3zM1189 1.4h1v2h-1zM1191 1.6h2v1h-2zM1193 1.1h1v2h-1zM1195 1.6h1v1h-1zM1201 1.7h3v2h-3zM1211 1.6h2v2h-2zM1214 0.9h2v2h-2zM1218 1.1h2v2h-2zM1220 0.7h2v2h-2zM1222 1.5h2v2h-2zM1224 0.8h2v3h-2zM1225 2.0h3v1h-3zM1232 1.1h2v1h-2zM1240 0.6h2v2h-2zM1247 1.2h3v2h-3zM1250 0.7h3v2h-3zM1253 0.9h2v2h-2zM1255 1.4h1v2h-1zM1257 0.7h1v3h-1zM1259 1.3h3v2h-3zM1261 0.8h3v3h-3zM1262 0.9h2v2h-2zM1269 0.5h2v3h-2zM1273 0.5h1v2h-1zM1277 1.3h3v1h-3zM1281 1.5h1v2h-1zM1284 1.6h1v2h-1zM1288 1.7h3v1h-3zM1291 1.0h1v1h-1zM1293 1.2h2v2h-2zM1294 0.5h1v2h-1zM1297 1.4h2v2h-2zM1298 0.6h1v2h-1zM1299 0.6h3v2h-3zM1300 1.6h1v2h-1zM1302 0.5h2v3h-2zM1306 1.4h3v1h-3zM1309 0.8h2v3h-2zM1317 1.7h3v2h-3zM1319 1.3h2v1h-2zM1322 0.6h2v3h-2zM1326 0.8h1v3h-1zM1329 2.5h1v1h-1zM1332 1.3h3v2h-3zM1333 1.7h2v1h-2zM1336 0.6h1v2h-1zM1338 1.9h1v1h-1zM1342 1.1h3v2h-3zM1345 0.7h2v3h-2zM1347 1.6h1v2h-1zM1350 0.6h1v3h-1zM1354 1.3h3v2h-3zM1358 1.2h1v2h-1zM1364 1.6h2v2h-2zM1366 0.6h2v3h-2zM1368 1.2h1v2h-1zM1374 0.8h3v3h-3zM1376 1.8h1v2h-1zM1380 0.6h1v3h-1zM1382 1.6h1v2h-1zM1385 1.5h2v2h-2zM1389 0.8h1v3h-1zM1390 1.6h3v1h-3zM1393 1.4h2v1h-2zM1396 0.9h2v2h-2zM1399 0.7h3v3h-3zM1403 1.2h2v2h-2zM1405 0.6h2v2h-2zM1407 1.7h3v2h-3zM1410 0.6h2v3h-2zM1416 0.6h2v3h-2zM1418 0.8h2v3h-2zM1422 1.4h1v1h-1zM1425 1.6h3v2h-3zM1428 1.4h2v2h-2zM1434 2.4h2v1h-2zM1437 1.6h2v2h-2zM1443 1.6h3v2h-3zM1445 0.6h1v3h-1zM1449 1.2h1v2h-1zM1453 0.5h1v3h-1zM1454 2.6h3v1h-3zM1460 0.7h1v2h-1zM1463 1.2h3v2h-3zM1466 1.2h1v2h-1zM1469 0.9h1v1h-1zM1472 0.7h2v3h-2zM1473 0.7h3v2h-3zM1475 1.1h1v1h-1zM1479 0.7h1v3h-1zM1480 1.5h2v1h-2zM1483 0.9h1v1h-1zM1488 1.0h2v2h-2zM1494 1.0h2v2h-2zM1500 0.9h1v1h-1zM1502 1.0h1v2h-1zM1504 0.6h3v3h-3zM1508 0.7h1v3h-1zM1510 1.1h2v2h-2zM1512 1.4h1v2h-1zM1516 0.9h1v2h-1zM1518 0.7h2v2h-2zM1520 0.7h2v3h-2zM1523 0.8h2v2h-2zM1526 0.7h2v3h-2zM1528 0.7h2v2h-2zM1529 1.5h1v2h-1zM1532 0.9h3v2h-3zM1535 0.9h1v2h-1zM1540 0.8h2v2h-2zM1544 0.7h1v2h-1zM1548 0.8h2v3h-2zM1559 0.5h2v3h-2zM1563 0.6h1v3h-1zM1567 1.1h2v1h-2zM1570 0.5h1v3h-1zM1572 1.0h2v2h-2zM1573 1.2h1v2h-1zM1577 1.7h2v2h-2zM1582 2.7h1v1h-1zM1586 1.5h2v2h-2zM1588 0.7h1v3h-1zM1596 0.6h2v3h-2zM1598 2.1h2v1h-2zM1600 1.1h3v2h-3zM1602 0.7h3v2h-3zM1608 1.8h2v2h-2zM1610 1.0h2v1h-2zM1612 0.6h2v3h-2zM1614 1.7h2v2h-2zM1616 1.3h1v2h-1zM1618 0.7h1v3h-1zM1620 0.8h1v3h-1zM1624 1.1h1v2h-1zM1625 0.8h2v2h-2zM1629 0.9h1v2h-1zM1632 1.2h2v2h-2zM1633 2.2h2v1h-2zM1638 0.6h2v3h-2zM1641 2.0h2v1h-2zM1645 0.6h2v2h-2zM1649 0.9h2v2h-2zM1658 1.0h2v2h-2zM1664 1.6h1v2h-1zM1666 1.8h1v1h-1zM1674 1.1h1v2h-1zM1677 0.8h2v1h-2zM1679 0.5h2v3h-2zM1683 0.6h2v1h-2zM1689 2.0h2v1h-2zM1692 1.5h2v1h-2zM1700 0.7h1v3h-1zM1704 0.5h1v3h-1zM1706 1.8h2v2h-2zM1709 1.3h1v2h-1zM1711 1.1h2v2h-2zM1715 2.5h2v1h-2zM1717 0.8h2v1h-2zM1720 0.6h3v3h-3zM1722 0.6h2v2h-2zM1726 1.6h1v2h-1zM1728 1.4h1v2h-1zM1730 2.2h1v1h-1zM1733 2.3h2v1h-2zM1738 1.6h1v1h-1zM1742 1.2h1v2h-1zM1743 1.4h3v1h-3zM1744 1.1h1v2h-1zM1745 1.9h2v1h-2zM1747 1.0h2v2h-2zM1753 1.1h2v1h-2zM1756 0.5h2v3h-2zM1759 1.5h2v2h-2zM1760 1.0h1v2h-1zM1764 0.5h3v3h-3zM1765 0.7h1v2h-1zM1772 1.2h1v2h-1zM1779 0.7h1v3h-1zM1781 0.8h3v3h-3zM1783 0.6h2v3h-2zM1786 1.2h2v2h-2zM1791 1.6h1v2h-1zM1795 0.6h3v3h-3zM1797 0.6h2v3h-2zM1798 2.0h3v1h-3zM1802 0.6h2v3h-2zM1807 1.8h3v2h-3zM1812 1.5h1v2h-1zM1816 1.5h2v2h-2zM1821 0.6h3v3h-3zM1825 0.7h2v3h-2zM1829 2.5h1v1h-1zM1833 0.7h2v3h-2zM1838 0.8h2v2h-2zM1841 2.6h2v1h-2zM1847 1.8h3v2h-3zM1853 0.6h1v3h-1zM1855 2.2h2v1h-2zM1859 0.6h1v2h-1zM1862 1.6h3v2h-3zM1866 2.7h1v1h-1zM1869 1.4h1v2h-1zM1870 2.0h3v1h-3zM1871 2.0h2v1h-2zM1874 0.6h2v2h-2zM1878 0.8h2v3h-2zM1881 0.6h2v1h-2zM1883 1.5h2v1h-2zM1887 0.6h2v2h-2zM1889 1.3h3v1h-3zM1891 1.4h3v2h-3zM1894 1.6h1v2h-1zM1901 0.7h3v3h-3zM1903 0.8h2v2h-2zM1906 1.8h2v2h-2zM1908 1.9h1v1h-1zM1909 1.2h3v2h-3zM1911 1.5h3v2h-3zM1915 1.1h2v2h-2zM1918 0.6h2v3h-2zM1921 2.4h1v1h-1zM1924 1.0h2v1h-2zM1927 0.5h2v2h-2zM1928 0.8h2v2h-2zM1930 0.9h2v2h-2zM1933 1.1h3v2h-3zM1939 0.8h1v3h-1zM1941 0.6h3v3h-3zM1948 1.1h2v2h-2zM1952 1.8h1v2h-1zM1953 1.2h2v2h-2zM1955 0.7h1v3h-1zM1956 1.8h2v2h-2zM1957 0.6h1v1h-1zM1960 0.7h3v3h-3zM1964 2.5h2v1h-2zM1967 0.8h1v2h-1zM1970 1.7h3v1h-3zM1974 1.5h1v2h-1zM1976 0.8h1v2h-1zM1977 0.7h1v3h-1zM1979 2.0h2v1h-2zM1982 0.8h2v3h-2zM1986 0.6h2v3h-2zM1989 0.7h1v3h-1zM1996 1.4h3v2h-3zM2000 1.4h1v2h-1zM2003 1.4h3v2h-3zM2006 0.8h2v3h-2zM2007 1.3h2v2h-2zM2010 1.4h2v2h-2zM2015 1.9h2v1h-2zM2018 0.8h3v2h-3zM2023 1.8h2v2h-2zM2027 1.6h1v2h-1zM2029 0.6h1v3h-1zM2034 0.5h2v3h-2zM2036 1.3h2v1h-2zM2043 1.0h1v2h-1zM2046 0.7h2v3h-2zM2050 1.1h1v2h-1zM2054 1.5h2v2h-2zM2056 1.8h1v1h-1zM2057 1.7h2v2h-2zM2059 1.7h2v1h-2zM2064 1.7h2v2h-2zM2068 2.1h2v1h-2zM2073 0.8h2v2h-2zM2076 1.8h3v2h-3zM2080 0.9h1v2h-1zM2081 0.6h2v3h-2zM2084 1.9h1v1h-1zM2099 2.0h1v1h-1zM2103 2.6h3v1h-3zM2105 0.5h2v3h-2zM2111 0.5h1v3h-1zM2115 0.8h2v3h-2zM2118 1.8h2v2h-2zM2121 0.9h1v1h-1zM2124 1.2h2v1h-2zM2126 0.7h2v3h-2zM2129 0.8h2v2h-2zM2135 0.6h1v2h-1zM2138 0.7h2v3h-2zM2140 1.1h2v2h-2zM2144 0.5h1v2h-1zM2145 0.5h3v2h-3zM2149 0.6h1v3h-1zM2153 0.9h1v1h-1zM2157 2.4h1v1h-1zM2160 1.1h3v2h-3zM2164 1.2h2v2h-2zM2166 1.6h1v1h-1zM2169 0.7h2v3h-2zM2175 0.6h1v3h-1zM2179 1.7h1v2h-1zM2181 1.7h1v2h-1zM2190 1.4h2v2h-2zM2194 1.4h2v2h-2zM2197 0.6h2v1h-2zM2199 1.2h1v1h-1zM2201 1.0h2v1h-2zM2206 0.7h1v2h-1zM2210 1.8h2v1h-2zM2213 0.6h1v2h-1zM2215 0.9h2v2h-2zM2217 2.2h2v1h-2zM2220 2.3h3v1h-3zM2223 0.6h1v1h-1zM2226 0.7h1v3h-1zM2228 0.7h1v2h-1zM2229 0.7h2v2h-2zM2230 0.9h1v1h-1zM2232 1.1h1v2h-1zM2234 1.0h1v2h-1zM2236 1.8h3v2h-3zM2238 1.7h3v2h-3zM2239 0.7h1v3h-1zM2243 2.2h1v1h-1zM2246 1.2h3v1h-3zM2247 0.8h3v2h-3zM3 1372.1h1v2h-1zM6 1372.7h1v2h-1zM9 1373.0h1v1h-1zM13 1373.5h1v2h-1zM17 1372.4h2v2h-2zM19 1374.4h1v1h-1zM22 1373.8h3v2h-3zM25 1374.5h1v1h-1zM28 1373.6h2v2h-2zM31 1372.5h2v2h-2zM36 1372.9h3v2h-3zM43 1372.2h3v1h-3zM47 1372.6h3v3h-3zM50 1372.7h1v3h-1zM64 1372.8h2v3h-2zM65 1374.9h3v1h-3zM68 1372.9h3v2h-3zM70 1372.8h1v2h-1zM73 1372.2h2v2h-2zM75 1372.7h2v3h-2zM77 1372.8h1v3h-1zM79 1372.7h2v2h-2zM81 1372.3h3v3h-3zM89 1372.5h1v3h-1zM94 1373.4h2v2h-2zM97 1372.1h3v3h-3zM99 1372.9h1v2h-1zM101 1374.7h2v1h-2zM104 1374.6h1v1h-1zM108 1372.3h2v3h-2zM115 1374.8h2v1h-2zM118 1372.4h2v2h-2zM121 1373.5h2v2h-2zM132 1374.4h2v1h-2zM136 1373.4h2v2h-2zM138 1372.8h3v3h-3zM141 1373.0h1v2h-1zM142 1373.4h3v2h-3zM143 1373.9h2v2h-2zM145 1373.2h2v2h-2zM148 1372.8h2v2h-2zM154 1372.5h1v3h-1zM157 1372.5h2v1h-2zM160 1372.8h3v3h-3zM162 1373.7h2v2h-2zM163 1373.6h1v1h-1zM167 1372.5h2v2h-2zM172 1372.8h3v3h-3zM176 1373.3h2v2h-2zM180 1372.4h1v3h-1zM187 1373.7h2v2h-2zM194 1372.3h2v2h-2zM196 1373.5h2v1h-2zM199 1372.4h3v3h-3zM202 1372.4h1v2h-1zM204 1374.2h2v1h-2zM208 1373.3h2v2h-2zM212 1374.3h2v1h-2zM217 1372.2h1v2h-1zM221 1372.0h1v2h-1zM224 1372.0h2v2h-2zM231 1372.6h1v3h-1zM235 1373.5h2v1h-2zM237 1373.1h2v2h-2zM239 1373.7h1v2h-1zM242 1373.6h1v2h-1zM245 1373.4h1v2h-1zM248 1372.2h2v3h-2zM252 1373.9h2v1h-2zM255 1372.2h2v3h-2zM258 1372.6h2v2h-2zM260 1373.3h3v1h-3zM266 1373.1h2v2h-2zM272 1372.2h1v1h-1zM274 1373.1h3v2h-3zM278 1372.6h2v2h-2zM279 1372.9h2v3h-2zM283 1372.2h1v2h-1zM285 1373.0h2v3h-2zM295 1372.2h3v3h-3zM297 1373.9h1v2h-1zM300 1373.6h2v2h-2zM303 1372.6h1v1h-1zM306 1374.4h1v1h-1zM307 1373.8h1v2h-1zM312 1372.5h3v3h-3zM317 1372.9h2v3h-2zM318 1372.9h1v2h-1zM321 1373.7h2v1h-2zM325 1372.8h2v2h-2zM331 1372.6h2v3h-2zM335 1372.0h1v2h-1zM340 1372.2h1v2h-1zM343 1373.9h2v2h-2zM350 1372.1h2v2h-2zM353 1372.6h1v1h-1zM356 1372.2h3v2h-3zM360 1373.5h1v1h-1zM363 1374.1h3v1h-3zM367 1372.4h2v3h-2zM368 1372.6h1v1h-1zM374 1373.0h1v3h-1zM380 1374.2h1v1h-1zM381 1372.6h2v2h-2zM383 1373.5h3v2h-3zM384 1374.0h1v1h-1zM387 1373.0h2v3h-2zM390 1374.7h1v1h-1zM391 1373.7h1v2h-1zM395 1372.3h2v3h-2zM397 1372.1h2v2h-2zM400 1374.0h2v2h-2zM404 1372.5h2v2h-2zM406 1373.0h3v1h-3zM411 1373.6h1v2h-1zM414 1372.9h1v2h-1zM416 1374.9h3v1h-3zM418 1373.9h1v2h-1zM424 1372.4h1v2h-1zM425 1375.0h2v1h-2zM427 1373.4h3v2h-3zM431 1372.7h2v2h-2zM432 1373.2h1v2h-1zM436 1373.3h3v2h-3zM439 1372.2h2v2h-2zM443 1373.1h1v1h-1zM445 1373.8h2v2h-2zM448 1372.6h1v2h-1zM451 1373.0h1v3h-1zM455 1373.2h1v1h-1zM457 1373.3h1v2h-1zM459 1374.7h1v1h-1zM465 1372.1h2v2h-2zM468 1372.3h1v3h-1zM469 1372.2h1v1h-1zM470 1372.7h1v2h-1zM474 1372.7h2v2h-2zM476 1373.8h1v2h-1zM478 1372.7h2v1h-2zM485 1373.7h2v2h-2zM486 1372.5h2v2h-2zM487 1372.3h2v1h-2zM490 1372.1h1v3h-1zM495 1372.6h1v1h-1zM497 1373.9h2v2h-2zM500 1373.0h3v2h-3zM502 1372.2h2v1h-2zM505 1373.0h1v2h-1zM507 1372.3h1v3h-1zM512 1372.2h2v2h-2zM514 1372.4h2v1h-2zM517 1373.9h1v1h-1zM524 1373.5h1v2h-1zM528 1372.8h2v2h-2zM530 1373.4h2v2h-2zM531 1372.2h1v3h-1zM532 1372.6h1v2h-1zM534 1372.0h1v3h-1zM536 1372.1h2v2h-2zM538 1373.2h2v2h-2zM540 1372.6h2v2h-2zM543 1373.2h2v1h-2zM545 1373.5h1v2h-1zM548 1372.5h2v3h-2zM551 1372.5h1v2h-1zM552 1373.8h2v2h-2zM555 1372.5h2v1h-2zM558 1372.8h3v3h-3zM564 1373.9h1v2h-1zM568 1372.9h1v3h-1zM571 1372.8h1v2h-1zM574 1373.3h2v1h-2zM577 1373.8h3v2h-3zM580 1373.1h1v2h-1zM584 1373.9h2v2h-2zM586 1373.9h1v1h-1zM589 1373.3h2v1h-2zM591 1373.0h1v3h-1zM596 1373.8h2v2h-2zM598 1372.7h2v3h-2zM600 1373.8h1v2h-1zM601 1372.6h1v3h-1zM605 1372.9h3v3h-3zM608 1372.3h2v3h-2zM611 1372.4h1v3h-1zM618 1372.7h1v2h-1zM620 1373.8h1v1h-1zM627 1372.7h1v3h-1zM629 1372.2h1v2h-1zM631 1372.5h1v2h-1zM637 1374.8h1v1h-1zM639 1373.6h2v1h-2zM641 1372.7h2v2h-2zM642 1372.2h2v1h-2zM643 1373.6h2v2h-2zM647 1372.1h3v3h-3zM658 1372.6h1v2h-1zM660 1373.6h1v2h-1zM665 1372.1h2v3h-2zM669 1373.5h2v2h-2zM672 1373.4h3v2h-3zM673 1373.0h1v2h-1zM675 1373.8h2v2h-2zM683 1372.8h1v3h-1zM687 1372.3h2v3h-2zM691 1372.2h3v2h-3zM692 1372.4h1v2h-1zM699 1374.4h2v1h-2zM703 1372.5h2v3h-2zM704 1372.4h1v3h-1zM705 1372.9h3v2h-3zM713 1372.3h2v1h-2zM716 1372.1h2v2h-2zM719 1372.9h2v1h-2zM727 1372.7h1v3h-1zM732 1374.1h1v1h-1zM734 1372.2h3v3h-3zM736 1372.7h2v2h-2zM738 1372.3h3v1h-3zM749 1373.5h1v2h-1zM752 1373.8h1v2h-1zM755 1373.6h3v2h-3zM756 1374.0h2v2h-2zM759 1373.4h1v2h-1zM763 1373.1h1v2h-1zM766 1372.5h1v2h-1zM772 1372.4h2v3h-2zM790 1372.5h1v2h-1zM794 1372.3h2v2h-2zM797 1373.8h1v2h-1zM808 1372.9h1v3h-1zM817 1372.1h2v2h-2zM818 1372.7h1v1h-1zM819 1372.6h2v1h-2zM822 1373.0h2v3h-2zM824 1372.3h3v3h-3zM826 1373.1h2v2h-2zM827 1373.5h3v1h-3zM830 1372.4h1v2h-1zM833 1373.4h1v1h-1zM836 1373.0h1v3h-1zM838 1372.2h3v2h-3zM842 1372.7h1v2h-1zM846 1374.8h2v1h-2zM848 1373.0h2v2h-2zM851 1373.0h1v3h-1zM856 1374.6h3v1h-3zM858 1373.0h1v2h-1zM867 1372.3h1v2h-1zM871 1372.1h1v3h-1zM875 1372.8h2v2h-2zM878 1374.3h1v1h-1zM882 1372.5h1v2h-1zM884 1374.0h1v2h-1zM888 1372.5h2v2h-2zM892 1372.9h1v3h-1zM896 1372.9h1v2h-1zM900 1372.8h3v2h-3zM904 1372.3h1v2h-1zM907 1372.6h2v2h-2zM911 1372.4h1v2h-1zM913 1372.8h2v2h-2zM919 1372.5h2v3h-2zM922 1372.5h1v2h-1zM924 1372.1h1v3h-1zM928 1372.6h2v3h-2zM934 1372.4h1v3h-1zM938 1372.6h2v3h-2zM940 1373.3h1v2h-1zM946 1373.6h1v2h-1zM948 1372.6h2v2h-2zM951 1372.5h2v3h-2zM953 1373.1h1v2h-1zM955 1373.0h2v1h-2zM958 1372.0h3v2h-3zM961 1372.8h3v1h-3zM963 1373.9h2v2h-2zM966 1372.1h1v2h-1zM968 1372.1h1v2h-1zM970 1373.1h1v2h-1zM973 1374.2h1v1h-1zM977 1373.2h1v2h-1zM979 1372.2h1v2h-1zM980 1373.4h1v1h-1zM981 1373.3h3v2h-3zM983 1372.8h2v2h-2zM985 1375.0h2v1h-2zM991 1373.3h1v2h-1zM995 1374.3h3v1h-3zM1001 1373.8h2v1h-2zM1003 1373.7h3v2h-3zM1006 1373.4h2v2h-2zM1008 1374.5h1v1h-1zM1010 1372.7h1v3h-1zM1013 1372.6h2v2h-2zM1016 1375.0h1v1h-1zM1020 1373.6h3v2h-3zM1022 1373.0h3v3h-3zM1023 1372.9h1v2h-1zM1024 1372.7h2v3h-2zM1025 1373.1h1v1h-1zM1026 1372.9h2v3h-2zM1028 1372.2h2v2h-2zM1033 1373.6h2v2h-2zM1047 1372.7h2v3h-2zM1051 1374.2h1v1h-1zM1055 1372.7h3v2h-3zM1061 1372.2h1v1h-1zM1062 1372.9h3v3h-3zM1063 1373.9h2v2h-2zM1068 1372.7h3v2h-3zM1072 1372.5h1v2h-1zM1073 1373.9h3v2h-3zM1074 1372.2h3v3h-3zM1079 1373.3h2v2h-2zM1086 1372.8h1v2h-1zM1091 1372.2h2v2h-2zM1097 1373.1h2v1h-2zM1100 1372.8h2v2h-2zM1103 1372.4h1v2h-1zM1107 1373.0h3v2h-3zM1111 1372.4h1v2h-1zM1113 1373.3h1v1h-1zM1115 1374.3h1v1h-1zM1117 1375.0h2v1h-2zM1121 1372.1h1v2h-1zM1124 1373.8h2v2h-2zM1128 1373.8h2v2h-2zM1131 1373.7h1v1h-1zM1135 1373.2h1v2h-1zM1139 1372.4h2v3h-2zM1143 1372.1h3v3h-3zM1150 1374.9h2v1h-2zM1154 1372.7h2v2h-2zM1156 1372.5h2v2h-2zM1158 1372.2h1v2h-1zM1159 1373.7h3v1h-3zM1162 1372.7h1v1h-1zM1164 1373.8h1v2h-1zM1166 1372.6h1v3h-1zM1169 1374.0h1v2h-1zM1170 1373.8h3v2h-3zM1175 1373.5h1v2h-1zM1177 1372.1h2v2h-2zM1180 1372.6h1v2h-1zM1183 1373.2h2v2h-2zM1186 1372.9h1v1h-1zM1187 1373.0h1v2h-1zM1189 1372.3h1v3h-1zM1192 1374.1h2v1h-2zM1196 1372.1h1v3h-1zM1200 1372.5h2v2h-2zM1204 1373.2h1v1h-1zM1209 1373.6h1v1h-1zM1212 1372.4h2v2h-2zM1221 1372.1h3v3h-3zM1222 1374.1h1v1h-1zM1229 1374.4h1v1h-1zM1231 1372.7h3v2h-3zM1238 1374.0h2v2h-2zM1241 1373.6h1v1h-1zM1256 1374.0h2v1h-2zM1257 1374.6h2v1h-2zM1260 1373.0h3v3h-3zM1267 1373.0h2v2h-2zM1269 1373.2h2v2h-2zM1273 1373.3h3v1h-3zM1277 1372.6h1v2h-1zM1281 1372.2h2v3h-2zM1284 1372.6h3v2h-3zM1288 1372.3h2v3h-2zM1292 1373.4h2v2h-2zM1295 1373.7h2v2h-2zM1298 1373.4h2v2h-2zM1300 1372.8h2v2h-2zM1310 1374.2h2v1h-2zM1314 1373.1h2v1h-2zM1317 1372.9h2v3h-2zM1320 1372.3h1v2h-1zM1324 1372.6h1v2h-1zM1330 1373.3h1v1h-1zM1332 1372.3h2v1h-2zM1334 1374.0h2v2h-2zM1337 1374.2h2v1h-2zM1340 1372.4h1v2h-1zM1343 1372.6h3v2h-3zM1345 1372.9h1v2h-1zM1349 1373.5h2v1h-2zM1350 1374.0h2v2h-2zM1352 1373.0h1v1h-1zM1355 1372.7h2v2h-2zM1357 1372.5h1v2h-1zM1361 1374.0h1v1h-1zM1364 1373.6h3v2h-3zM1367 1373.6h2v2h-2zM1372 1372.9h1v2h-1zM1374 1374.7h1v1h-1zM1376 1372.5h2v3h-2zM1380 1373.5h1v1h-1zM1383 1372.4h2v2h-2zM1386 1372.6h2v2h-2zM1387 1373.1h2v1h-2zM1390 1373.3h1v2h-1zM1391 1374.9h2v1h-2zM1393 1374.0h1v2h-1zM1395 1372.8h2v2h-2zM1397 1373.7h2v2h-2zM1400 1373.4h1v2h-1zM1404 1372.8h3v3h-3zM1407 1372.5h1v2h-1zM1411 1373.3h3v2h-3zM1413 1373.4h3v2h-3zM1417 1372.6h1v2h-1zM1421 1373.3h3v2h-3zM1428 1372.4h2v3h-2zM1435 1372.5h1v2h-1zM1436 1372.0h3v1h-3zM1438 1373.7h2v2h-2zM1440 1372.4h2v1h-2zM1442 1373.9h1v1h-1zM1443 1372.6h2v2h-2zM1452 1374.4h2v1h-2zM1456 1374.8h2v1h-2zM1460 1372.8h3v2h-3zM1463 1373.9h2v2h-2zM1465 1372.3h3v2h-3zM1467 1372.7h1v1h-1zM1469 1372.0h2v3h-2zM1477 1372.7h1v2h-1zM1484 1372.9h1v3h-1zM1491 1373.1h1v2h-1zM1492 1373.4h2v1h-2zM1495 1372.9h1v2h-1zM1498 1373.4h1v2h-1zM1500 1372.8h1v3h-1zM1511 1372.6h3v2h-3zM1518 1373.4h1v2h-1zM1520 1372.9h3v2h-3zM1523 1374.9h1v1h-1zM1525 1373.6h3v1h-3zM1529 1373.9h3v2h-3zM1531 1373.4h2v1h-2zM1534 1373.1h1v2h-1zM1540 1372.8h1v1h-1zM1541 1372.0h1v2h-1zM1544 1372.1h1v3h-1zM1547 1372.7h1v3h-1zM1550 1372.4h2v3h-2zM1553 1372.1h2v3h-2zM1556 1372.3h2v3h-2zM1562 1372.9h1v2h-1zM1568 1374.1h1v1h-1zM1572 1373.7h2v2h-2zM1577 1373.3h1v2h-1zM1581 1373.1h2v1h-2zM1585 1372.7h3v2h-3zM1587 1372.1h1v2h-1zM1589 1372.2h3v2h-3zM1593 1374.3h2v1h-2zM1595 1372.6h3v3h-3zM1599 1373.6h1v1h-1zM1601 1372.1h2v3h-2zM1603 1373.0h1v2h-1zM1610 1373.7h3v2h-3zM1613 1373.7h2v2h-2zM1615 1372.7h2v2h-2zM1618 1373.9h2v2h-2zM1620 1372.1h1v3h-1zM1623 1372.7h2v3h-2zM1624 1372.3h1v3h-1zM1631 1372.0h2v1h-2zM1633 1373.7h1v1h-1zM1636 1373.6h1v2h-1zM1639 1372.6h3v2h-3zM1640 1372.3h1v3h-1zM1642 1373.2h3v2h-3zM1650 1372.0h1v3h-1zM1653 1373.3h2v2h-2zM1656 1372.3h3v3h-3zM1658 1373.4h3v2h-3zM1660 1373.2h3v2h-3zM1677 1372.2h3v1h-3zM1681 1372.8h2v2h-2zM1683 1373.3h1v2h-1zM1684 1372.0h3v3h-3zM1689 1372.7h2v2h-2zM1693 1372.7h2v3h-2zM1696 1372.9h1v3h-1zM1702 1373.4h1v2h-1zM1703 1373.8h1v2h-1zM1708 1374.0h2v2h-2zM1714 1373.8h1v2h-1zM1717 1373.6h2v1h-2zM1719 1373.9h1v2h-1zM1721 1372.8h2v2h-2zM1724 1372.9h1v3h-1zM1730 1373.8h1v1h-1zM1733 1372.7h3v1h-3zM1735 1373.1h1v2h-1zM1740 1372.5h3v3h-3zM1743 1372.3h3v3h-3zM1746 1373.2h1v2h-1zM1751 1373.0h1v2h-1zM1752 1373.9h2v2h-2zM1755 1372.8h2v3h-2zM1761 1373.5h1v2h-1zM1767 1372.7h1v3h-1zM1773 1373.6h1v2h-1zM1774 1373.4h1v1h-1zM1779 1372.2h1v3h-1zM1784 1373.3h2v2h-2zM1787 1373.0h3v1h-3zM1793 1372.1h2v1h-2zM1797 1373.8h2v1h-2zM1800 1372.8h2v2h-2zM1801 1372.1h3v3h-3zM1802 1372.7h1v3h-1zM1805 1372.9h1v3h-1zM1807 1373.3h2v2h-2zM1810 1372.1h2v3h-2zM1817 1373.9h2v2h-2zM1820 1373.3h3v1h-3zM1823 1373.2h3v2h-3zM1826 1374.1h3v1h-3zM1830 1374.3h2v1h-2zM1832 1372.5h1v2h-1zM1839 1373.2h3v2h-3zM1842 1373.0h3v3h-3zM1849 1374.8h2v1h-2zM1852 1373.0h3v1h-3zM1853 1373.1h1v2h-1zM1854 1372.5h1v3h-1zM1856 1373.8h1v2h-1zM1863 1372.6h1v3h-1zM1869 1373.7h2v2h-2zM1872 1372.3h2v2h-2zM1876 1372.6h1v1h-1zM1880 1372.8h2v3h-2zM1883 1373.0h1v1h-1zM1885 1372.3h1v1h-1zM1889 1372.9h1v2h-1zM1893 1373.2h1v1h-1zM1895 1373.6h2v2h-2zM1898 1372.1h1v3h-1zM1901 1372.9h1v2h-1zM1904 1372.8h2v2h-2zM1908 1372.3h2v3h-2zM1910 1373.0h1v2h-1zM1917 1374.8h1v1h-1zM1921 1372.6h2v2h-2zM1929 1372.3h3v2h-3zM1931 1372.7h1v3h-1zM1932 1372.4h3v3h-3zM1934 1373.0h1v3h-1zM1938 1373.9h1v1h-1zM1940 1372.4h1v3h-1zM1947 1372.1h2v3h-2zM1948 1372.8h1v3h-1zM1951 1372.6h3v3h-3zM1956 1372.5h2v2h-2zM1962 1373.3h2v2h-2zM1964 1374.7h2v1h-2zM1966 1372.9h2v3h-2zM1969 1372.5h1v1h-1zM1971 1373.8h2v2h-2zM1975 1373.1h1v2h-1zM1979 1372.2h1v1h-1zM1981 1372.7h2v2h-2zM1983 1372.3h2v2h-2zM1990 1372.6h2v1h-2zM1992 1373.3h3v2h-3zM1993 1373.2h2v2h-2zM1995 1372.8h2v3h-2zM1999 1373.1h2v2h-2zM2001 1372.6h2v3h-2zM2008 1373.8h1v1h-1zM2012 1372.2h2v3h-2zM2016 1373.0h1v3h-1zM2021 1372.6h1v2h-1zM2033 1373.1h1v2h-1zM2036 1372.8h1v2h-1zM2037 1373.2h2v2h-2zM2039 1373.1h2v1h-2zM2042 1372.5h1v2h-1zM2045 1373.5h2v2h-2zM2049 1372.5h3v2h-3zM2053 1372.6h2v2h-2zM2058 1372.0h2v2h-2zM2060 1373.9h2v1h-2zM2062 1372.3h1v3h-1zM2068 1373.0h3v1h-3zM2074 1373.8h2v2h-2zM2079 1373.8h1v2h-1zM2080 1372.3h3v2h-3zM2088 1372.9h1v2h-1zM2091 1372.3h2v1h-2zM2093 1373.9h1v2h-1zM2097 1373.7h3v2h-3zM2099 1372.9h3v2h-3zM2102 1373.9h2v2h-2zM2104 1372.2h2v3h-2zM2107 1372.8h1v3h-1zM2111 1373.9h1v2h-1zM2112 1372.7h3v2h-3zM2113 1372.9h3v1h-3zM2117 1372.3h2v3h-2zM2119 1372.6h3v1h-3zM2121 1372.2h2v3h-2zM2129 1372.0h1v2h-1zM2132 1372.6h3v2h-3zM2133 1373.1h3v2h-3zM2135 1372.5h1v2h-1zM2140 1373.0h2v2h-2zM2143 1373.5h1v1h-1zM2153 1372.2h2v3h-2zM2156 1372.3h1v3h-1zM2157 1373.1h2v2h-2zM2160 1372.3h1v2h-1zM2161 1372.2h2v2h-2zM2164 1372.5h1v3h-1zM2168 1372.3h1v3h-1zM2172 1372.8h1v3h-1zM2174 1373.6h3v2h-3zM2175 1372.4h2v1h-2zM2179 1373.8h3v2h-3zM2183 1373.5h2v1h-2zM2186 1372.9h1v2h-1zM2189 1373.0h1v2h-1zM2191 1373.9h2v2h-2zM2192 1373.2h2v1h-2zM2195 1372.1h1v2h-1zM2198 1373.7h1v2h-1zM2202 1373.7h1v2h-1zM2204 1372.4h2v3h-2zM2206 1373.0h2v1h-2zM2210 1373.9h2v2h-2zM2213 1372.7h1v3h-1zM2219 1373.3h3v1h-3zM2221 1372.9h1v2h-1zM2223 1373.3h2v1h-2zM2225 1373.9h3v2h-3zM2232 1373.3h2v2h-2zM2237 1372.3h3v2h-3zM2239 1372.5h1v2h-1zM2242 1372.6h2v2h-2zM2246 1373.2h3v2h-3zM2249 1372.3h1v2h-1zM2251 1372.2h2v3h-2zM1.3 9h2v3h-2zM0.6 14h3v2h-3zM1.6 17h2v1h-2zM0.7 20h2v2h-2zM1.2 22h2v1h-2zM1.4 24h2v2h-2zM1.7 29h1v3h-1zM2.2 30h1v2h-1zM1.1 35h2v3h-2zM0.6 37h3v1h-3zM1.6 42h2v1h-2zM0.9 45h2v2h-2zM1.8 48h1v1h-1zM1.5 50h2v2h-2zM0.8 52h2v3h-2zM1.0 53h2v1h-2zM0.6 56h3v3h-3zM0.6 59h1v2h-1zM0.9 62h2v1h-2zM1.1 69h2v2h-2zM0.6 71h3v1h-3zM0.6 74h3v2h-3zM1.4 76h2v2h-2zM0.6 77h3v3h-3zM1.7 81h1v3h-1zM1.5 84h2v2h-2zM1.3 85h2v1h-2zM1.3 90h2v1h-2zM0.6 92h3v1h-3zM2.1 93h1v2h-1zM0.6 94h3v3h-3zM0.7 99h2v2h-2zM0.6 102h3v1h-3zM1.0 105h2v3h-2zM0.7 108h2v1h-2zM0.7 113h2v1h-2zM0.6 114h3v1h-3zM0.6 116h3v3h-3zM0.9 118h2v1h-2zM0.6 123h3v1h-3zM0.6 129h3v1h-3zM0.6 132h3v2h-3zM0.6 135h3v1h-3zM0.6 136h3v1h-3zM0.6 138h3v1h-3zM1.1 144h2v3h-2zM1.4 148h1v2h-1zM0.6 151h3v1h-3zM0.6 157h2v1h-2zM0.6 159h3v1h-3zM1.1 166h2v2h-2zM0.8 172h2v2h-2zM1.3 184h1v3h-1zM0.6 187h3v2h-3zM0.7 190h2v2h-2zM0.6 191h3v1h-3zM0.6 195h1v1h-1zM1.1 200h2v2h-2zM1.8 203h1v2h-1zM1.0 210h2v1h-2zM1.8 212h1v2h-1zM0.6 214h3v3h-3zM0.7 216h2v2h-2zM0.6 217h3v2h-3zM1.0 225h2v2h-2zM2.3 228h1v1h-1zM0.9 229h1v3h-1zM0.6 232h3v2h-3zM2.2 234h1v1h-1zM0.6 237h3v2h-3zM0.9 243h2v1h-2zM1.2 244h2v1h-2zM0.7 247h2v1h-2zM1.2 249h1v3h-1zM0.6 256h3v2h-3zM0.6 258h3v1h-3zM1.5 261h2v1h-2zM0.6 262h3v2h-3zM0.6 265h3v3h-3zM0.9 268h2v1h-2zM1.0 270h2v1h-2zM0.6 273h3v2h-3zM0.7 275h2v2h-2zM0.6 277h3v1h-3zM1.8 281h1v2h-1zM0.8 284h2v1h-2zM1.2 286h2v1h-2zM1.4 288h2v2h-2zM0.7 291h1v3h-1zM2.2 293h1v1h-1zM2.4 299h1v2h-1zM1.2 303h2v2h-2zM1.2 309h2v2h-2zM1.5 312h2v2h-2zM0.6 313h3v1h-3zM0.6 314h3v1h-3zM2.4 316h1v2h-1zM2.0 326h1v3h-1zM1.6 329h2v3h-2zM0.8 334h2v1h-2zM1.0 336h2v1h-2zM1.3 338h2v2h-2zM1.6 341h2v1h-2zM0.6 343h2v1h-2zM1.0 345h2v3h-2zM0.8 348h1v1h-1zM2.1 351h1v1h-1zM1.4 354h2v1h-2zM0.6 357h3v3h-3zM0.6 359h3v2h-3zM0.6 361h3v3h-3zM0.6 363h3v1h-3zM1.2 366h2v3h-2zM1.3 374h2v1h-2zM1.1 378h2v1h-2zM0.6 379h3v2h-3zM1.5 382h2v2h-2zM0.9 384h2v2h-2zM0.6 385h3v2h-3zM0.6 389h3v2h-3zM1.2 396h1v1h-1zM0.6 399h3v1h-3zM0.7 403h2v3h-2zM1.0 404h1v2h-1zM1.0 407h2v1h-2zM1.0 408h2v1h-2zM0.8 409h2v3h-2zM1.1 411h2v1h-2zM1.0 413h2v1h-2zM2.6 416h1v2h-1zM0.7 417h1v3h-1zM0.8 418h1v3h-1zM0.6 420h3v3h-3zM0.6 422h3v2h-3zM1.4 430h2v1h-2zM0.6 432h3v2h-3zM0.6 437h3v1h-3zM0.6 440h3v2h-3zM1.5 442h1v2h-1zM1.1 444h2v2h-2zM0.6 446h3v2h-3zM0.6 448h3v2h-3zM1.1 451h2v3h-2zM0.8 455h2v2h-2zM0.6 457h3v2h-3zM0.8 458h2v1h-2zM0.6 460h3v3h-3zM1.3 467h2v1h-2zM1.0 477h2v2h-2zM0.8 480h2v3h-2zM0.6 485h3v1h-3zM0.6 488h3v1h-3zM2.1 496h1v1h-1zM0.6 497h3v1h-3zM0.6 500h3v1h-3zM0.6 502h3v1h-3zM0.6 504h3v2h-3zM1.5 507h2v1h-2zM1.5 509h2v1h-2zM0.6 515h3v3h-3zM0.9 516h2v3h-2zM1.0 520h2v2h-2zM1.5 523h2v3h-2zM0.6 526h3v2h-3zM2.1 531h1v2h-1zM0.6 534h3v1h-3zM0.8 536h2v1h-2zM0.6 538h3v1h-3zM1.1 541h2v1h-2zM0.7 542h2v2h-2zM0.6 544h3v1h-3zM2.5 545h1v3h-1zM1.2 547h2v2h-2zM1.8 548h1v1h-1zM2.5 555h1v1h-1zM0.8 557h1v1h-1zM0.6 563h3v1h-3zM0.8 566h2v1h-2zM0.9 567h2v1h-2zM0.6 570h3v2h-3zM1.3 574h2v1h-2zM0.6 577h3v3h-3zM2.3 583h1v1h-1zM0.6 585h3v3h-3zM1.1 589h2v2h-2zM0.7 598h2v2h-2zM0.7 602h1v1h-1zM0.6 606h3v3h-3zM1.4 608h2v2h-2zM1.0 612h1v1h-1zM0.6 616h3v3h-3zM0.6 619h3v2h-3zM2.5 621h1v2h-1zM1.6 624h2v2h-2zM0.6 625h3v3h-3zM0.6 628h3v2h-3zM1.4 632h1v1h-1zM2.0 638h1v2h-1zM1.3 639h2v1h-2zM1.3 644h2v2h-2zM2.5 650h1v1h-1zM0.8 653h2v1h-2zM1.4 658h2v1h-2zM0.6 662h3v2h-3zM1.1 664h2v1h-2zM1.1 666h2v2h-2zM0.8 670h2v1h-2zM2.1 673h1v2h-1zM1.6 682h1v1h-1zM0.6 684h3v3h-3zM0.7 688h2v3h-2zM1.5 691h2v2h-2zM0.6 698h3v1h-3zM0.6 702h3v2h-3zM0.9 709h2v2h-2zM0.9 710h2v3h-2zM1.0 715h2v2h-2zM0.6 719h3v2h-3zM2.0 722h1v2h-1zM1.4 725h2v2h-2zM0.9 726h2v3h-2zM0.9 729h2v1h-2zM1.0 732h2v2h-2zM0.7 735h2v3h-2zM0.6 739h3v2h-3zM0.8 741h2v2h-2zM1.6 744h1v3h-1zM1.2 748h2v1h-2zM0.7 750h2v3h-2zM1.5 758h2v2h-2zM1.1 759h2v1h-2zM0.6 762h3v1h-3zM1.6 763h2v1h-2zM0.6 768h3v2h-3zM0.6 771h3v3h-3zM2.2 773h1v3h-1zM1.5 776h2v2h-2zM1.5 780h2v3h-2zM0.6 783h3v2h-3zM0.7 785h2v3h-2zM0.8 788h2v1h-2zM1.5 790h2v2h-2zM1.2 794h1v3h-1zM0.8 798h2v2h-2zM0.6 801h3v3h-3zM0.8 803h2v1h-2zM1.4 807h2v1h-2zM0.7 810h2v3h-2zM0.6 811h3v2h-3zM1.9 813h1v2h-1zM0.9 814h2v1h-2zM2.0 818h1v1h-1zM0.6 821h3v2h-3zM1.6 824h2v1h-2zM1.0 826h2v3h-2zM0.6 829h3v3h-3zM1.4 830h2v2h-2zM1.4 834h2v1h-2zM0.8 836h1v2h-1zM0.8 843h2v1h-2zM1.6 844h1v1h-1zM1.6 848h1v2h-1zM0.6 853h3v1h-3zM0.6 856h2v3h-2zM0.9 866h1v1h-1zM0.8 871h2v1h-2zM0.6 874h3v3h-3zM1.0 875h1v2h-1zM0.6 878h3v1h-3zM2.0 881h1v1h-1zM2.0 883h1v2h-1zM0.6 886h3v1h-3zM0.6 892h3v2h-3zM0.6 895h3v1h-3zM1.4 898h2v2h-2zM0.7 908h2v1h-2zM1.4 911h2v1h-2zM1.7 918h1v2h-1zM2.2 921h1v1h-1zM0.7 925h2v2h-2zM1.0 926h2v3h-2zM0.8 932h2v2h-2zM0.6 935h3v1h-3zM0.6 938h3v2h-3zM1.5 941h2v2h-2zM1.6 945h2v1h-2zM1.6 952h1v1h-1zM0.8 953h2v3h-2zM1.4 955h2v2h-2zM1.9 956h1v3h-1zM1.5 960h2v3h-2zM0.7 963h2v2h-2zM1.6 968h2v1h-2zM0.7 971h2v1h-2zM0.8 974h2v1h-2zM2.2 976h1v2h-1zM0.9 978h1v1h-1zM1.0 980h2v1h-2zM1.0 981h2v1h-2zM0.9 982h1v3h-1zM0.8 986h2v1h-2zM1.2 987h2v1h-2zM0.7 989h2v2h-2zM0.6 991h3v1h-3zM1.4 994h2v1h-2zM1.3 995h2v3h-2zM0.6 997h3v3h-3zM1.1 1000h2v3h-2zM1.3 1002h2v3h-2zM1.2 1003h2v2h-2zM0.6 1008h3v1h-3zM0.6 1010h3v3h-3zM0.6 1015h3v1h-3zM1.1 1018h2v3h-2zM0.6 1020h3v3h-3zM1.1 1023h2v1h-2zM1.3 1029h2v1h-2zM1.2 1034h1v1h-1zM0.6 1038h3v3h-3zM1.1 1040h2v2h-2zM0.8 1047h1v1h-1zM2.2 1051h1v1h-1zM1.4 1053h2v1h-2zM1.8 1054h1v1h-1zM0.6 1060h3v2h-3zM0.6 1062h1v2h-1zM1.5 1063h2v1h-2zM1.8 1065h1v2h-1zM0.9 1068h2v3h-2zM1.0 1070h1v2h-1zM1.2 1074h2v1h-2zM0.6 1083h3v2h-3zM0.6 1085h3v3h-3zM0.7 1091h2v1h-2zM1.6 1093h2v3h-2zM1.1 1095h2v1h-2zM1.4 1096h2v2h-2zM0.7 1099h2v1h-2zM1.3 1103h2v2h-2zM1.5 1105h1v2h-1zM1.4 1108h1v1h-1zM0.6 1112h3v1h-3zM0.7 1114h2v3h-2zM0.6 1120h3v3h-3zM1.1 1123h2v2h-2zM0.8 1125h2v2h-2zM1.5 1128h1v3h-1zM0.6 1137h3v1h-3zM0.8 1139h2v2h-2zM1.0 1141h2v1h-2zM1.4 1145h2v2h-2zM1.3 1150h2v1h-2zM0.6 1156h3v2h-3zM0.9 1166h2v1h-2zM1.3 1168h2v2h-2zM1.3 1172h2v1h-2zM1.5 1174h2v1h-2zM2.5 1176h1v1h-1zM0.8 1180h1v1h-1zM2.1 1183h1v1h-1zM0.8 1185h2v1h-2zM1.0 1186h1v3h-1zM0.8 1188h2v1h-2zM1.4 1189h1v1h-1zM1.4 1191h2v1h-2zM1.7 1193h1v1h-1zM0.6 1195h3v1h-3zM1.3 1201h2v1h-2zM1.4 1202h2v2h-2zM0.6 1207h3v1h-3zM1.5 1211h2v1h-2zM0.6 1213h3v3h-3zM0.9 1218h2v2h-2zM1.5 1221h2v2h-2zM0.7 1224h2v3h-2zM0.6 1226h3v2h-3zM1.4 1230h2v1h-2zM1.3 1231h2v2h-2zM1.4 1234h2v3h-2zM0.8 1236h2v3h-2zM1.5 1237h2v3h-2zM1.4 1239h2v1h-2zM1.0 1242h2v1h-2zM1.9 1246h1v1h-1zM0.8 1249h2v1h-2zM1.6 1252h2v2h-2zM1.4 1255h1v1h-1zM2.6 1256h1v1h-1zM0.6 1259h2v3h-2zM0.6 1260h3v1h-3zM1.8 1263h1v2h-1zM2.2 1264h1v3h-1zM1.5 1265h2v3h-2zM0.6 1267h3v3h-3zM0.6 1270h3v3h-3zM1.6 1273h2v2h-2zM2.0 1282h1v2h-1zM1.7 1284h1v1h-1zM2.4 1286h1v1h-1zM2.5 1287h1v2h-1zM0.7 1291h2v2h-2zM0.6 1292h3v2h-3zM0.8 1295h2v1h-2zM1.4 1307h2v1h-2zM0.6 1310h3v2h-3zM1.4 1311h2v2h-2zM1.0 1312h2v2h-2zM1.0 1315h2v3h-2zM1.4 1323h2v2h-2zM0.7 1326h2v1h-2zM1.5 1329h2v1h-2zM0.7 1332h2v2h-2zM0.8 1335h2v3h-2zM1.6 1338h1v3h-1zM0.6 1341h3v2h-3zM1.4 1343h2v2h-2zM1.4 1345h1v2h-1zM0.6 1346h3v1h-3zM2.0 1352h1v1h-1zM1.5 1354h1v1h-1zM1.4 1356h2v1h-2zM2.6 1358h1v2h-1zM1.0 1359h1v2h-1zM0.6 1368h3v1h-3zM0.7 1375h2v2h-2zM0.6 1378h3v1h-3zM2247.1 4h2v3h-2zM2246.4 7h1v2h-1zM2248.0 11h1v1h-1zM2247.0 13h3v3h-3zM2246.1 15h2v2h-2zM2247.5 23h2v3h-2zM2247.7 26h1v1h-1zM2247.7 28h1v1h-1zM2247.2 30h2v2h-2zM2246.2 37h3v2h-3zM2246.0 42h2v1h-2zM2246.9 46h2v1h-2zM2247.0 47h2v2h-2zM2246.7 49h3v2h-3zM2246.2 51h1v2h-1zM2246.9 55h3v1h-3zM2246.7 58h1v1h-1zM2246.0 60h3v1h-3zM2247.2 61h1v3h-1zM2247.7 64h2v3h-2zM2246.5 70h1v2h-1zM2246.1 71h3v2h-3zM2248.2 74h1v3h-1zM2246.3 76h3v2h-3zM2246.8 82h3v2h-3zM2246.7 87h2v2h-2zM2246.9 89h3v1h-3zM2246.9 91h1v3h-1zM2246.1 93h2v2h-2zM2246.5 95h2v1h-2zM2247.4 97h2v3h-2zM2247.3 100h1v2h-1zM2246.4 104h3v2h-3zM2247.5 105h1v3h-1zM2247.0 107h3v2h-3zM2246.1 108h2v1h-2zM2246.9 110h2v3h-2zM2248.0 111h2v2h-2zM2247.0 113h2v2h-2zM2248.0 115h1v3h-1zM2246.1 116h3v2h-3zM2247.3 119h1v2h-1zM2246.3 126h2v1h-2zM2248.2 128h1v1h-1zM2246.6 130h2v2h-2zM2246.7 132h2v3h-2zM2247.6 134h2v2h-2zM2247.6 139h2v2h-2zM2246.3 144h3v1h-3zM2246.0 160h2v2h-2zM2248.0 163h2v1h-2zM2248.1 165h1v2h-1zM2246.8 166h3v2h-3zM2247.6 172h2v3h-2zM2246.7 175h3v3h-3zM2246.8 179h2v3h-2zM2247.9 197h2v3h-2zM2246.7 201h3v2h-3zM2247.7 204h2v1h-2zM2246.5 206h3v1h-3zM2248.0 211h2v2h-2zM2246.6 213h3v1h-3zM2247.2 216h2v2h-2zM2246.8 218h1v2h-1zM2247.9 219h1v1h-1zM2246.4 223h3v2h-3zM2246.7 225h2v2h-2zM2246.5 227h1v1h-1zM2247.9 231h2v3h-2zM2248.3 243h1v1h-1zM2247.6 247h1v1h-1zM2247.9 249h2v3h-2zM2246.1 251h2v2h-2zM2246.7 252h3v3h-3zM2247.6 255h1v2h-1zM2247.8 258h2v2h-2zM2246.8 261h2v1h-2zM2246.4 266h2v1h-2zM2246.5 267h2v1h-2zM2247.1 274h1v2h-1zM2246.6 278h2v3h-2zM2247.7 281h2v1h-2zM2247.9 283h2v1h-2zM2246.7 287h3v2h-3zM2247.0 293h3v2h-3zM2246.7 298h2v2h-2zM2246.2 302h3v1h-3zM2247.9 303h1v1h-1zM2246.2 307h3v1h-3zM2247.5 311h2v2h-2zM2246.6 319h3v2h-3zM2246.8 321h3v3h-3zM2246.3 325h3v2h-3zM2246.9 328h3v1h-3zM2246.8 330h3v1h-3zM2246.4 333h2v1h-2zM2246.9 336h2v1h-2zM2246.7 337h1v3h-1zM2248.6 339h1v1h-1zM2247.2 342h2v1h-2zM2247.4 345h2v2h-2zM2246.4 348h1v1h-1zM2248.6 352h1v2h-1zM2246.5 354h1v1h-1zM2248.8 361h1v2h-1zM2247.2 362h2v2h-2zM2246.8 370h2v2h-2zM2247.0 372h2v2h-2zM2247.4 374h2v2h-2zM2246.6 377h2v2h-2zM2247.2 379h2v3h-2zM2246.9 384h1v1h-1zM2247.9 387h2v2h-2zM2246.7 390h3v1h-3zM2246.9 399h1v3h-1zM2246.5 402h1v2h-1zM2247.4 411h2v1h-2zM2246.3 415h2v1h-2zM2246.3 419h2v1h-2zM2246.8 423h2v3h-2zM2247.6 426h2v1h-2zM2247.5 430h2v2h-2zM2246.5 435h1v2h-1zM2246.8 437h3v1h-3zM2249.0 441h1v3h-1zM2247.5 448h2v2h-2zM2247.8 451h2v1h-2zM2246.7 455h3v2h-3zM2246.8 462h2v3h-2zM2247.0 464h3v1h-3zM2247.5 467h2v1h-2zM2247.3 469h2v1h-2zM2246.6 473h3v3h-3zM2247.6 475h2v2h-2zM2247.0 479h3v3h-3zM2246.8 480h2v2h-2zM2246.8 483h3v1h-3zM2247.0 487h2v2h-2zM2247.8 490h1v2h-1zM2246.9 494h3v1h-3zM2246.2 495h3v2h-3zM2247.0 498h1v1h-1zM2247.4 500h2v2h-2zM2247.1 504h1v2h-1zM2248.6 507h1v3h-1zM2246.4 510h3v3h-3zM2246.7 516h1v1h-1zM2247.3 520h2v2h-2zM2246.9 523h2v2h-2zM2247.8 526h2v2h-2zM2246.4 528h2v1h-2zM2246.4 529h3v3h-3zM2246.3 533h3v1h-3zM2246.3 539h3v1h-3zM2246.3 545h3v2h-3zM2247.8 551h1v3h-1zM2247.0 554h3v3h-3zM2248.9 557h1v3h-1zM2246.1 561h3v1h-3zM2246.5 562h1v1h-1zM2246.4 565h3v2h-3zM2247.3 568h2v1h-2zM2246.3 571h3v1h-3zM2246.7 575h2v1h-2zM2246.6 578h3v2h-3zM2246.8 580h1v1h-1zM2246.8 582h2v3h-2zM2246.9 586h1v2h-1zM2246.5 590h3v2h-3zM2247.8 593h2v3h-2zM2246.1 595h3v2h-3zM2246.9 599h1v2h-1zM2246.7 601h3v3h-3zM2247.6 604h2v1h-2zM2246.4 606h3v2h-3zM2247.8 608h2v2h-2zM2246.9 611h1v3h-1zM2248.6 614h1v1h-1zM2246.7 616h3v2h-3zM2246.0 618h1v2h-1zM2246.8 621h1v1h-1zM2246.3 623h1v2h-1zM2246.1 624h2v2h-2zM2246.7 628h2v1h-2zM2246.1 630h1v2h-1zM2246.8 634h2v1h-2zM2246.7 636h2v3h-2zM2246.5 639h2v2h-2zM2246.3 642h2v2h-2zM2246.9 645h2v2h-2zM2247.1 648h2v2h-2zM2247.6 650h2v1h-2zM2246.2 653h2v1h-2zM2246.9 657h2v1h-2zM2248.0 659h2v2h-2zM2246.3 663h3v1h-3zM2246.1 668h2v3h-2zM2246.0 673h2v2h-2zM2247.2 679h2v2h-2zM2246.0 682h2v1h-2zM2246.1 685h2v2h-2zM2247.5 686h1v2h-1zM2247.5 690h2v3h-2zM2249.0 692h1v2h-1zM2246.4 696h2v2h-2zM2248.0 697h2v2h-2zM2246.6 701h3v1h-3zM2247.6 704h1v1h-1zM2247.8 706h2v2h-2zM2246.4 711h3v1h-3zM2246.7 714h3v3h-3zM2248.5 717h1v1h-1zM2247.6 719h1v3h-1zM2248.2 723h1v3h-1zM2246.8 728h2v1h-2zM2247.5 731h2v1h-2zM2246.5 733h2v1h-2zM2246.1 736h3v1h-3zM2246.4 740h2v1h-2zM2247.4 741h2v1h-2zM2246.7 744h3v1h-3zM2247.4 747h1v3h-1zM2247.8 755h2v2h-2zM2246.5 758h3v2h-3zM2246.9 762h3v2h-3zM2246.6 764h2v1h-2zM2246.4 768h3v2h-3zM2246.3 770h2v2h-2zM2247.4 771h2v3h-2zM2248.8 773h1v1h-1zM2246.3 781h3v1h-3zM2247.9 786h2v1h-2zM2247.9 787h1v3h-1zM2246.3 789h3v2h-3zM2246.2 793h3v3h-3zM2247.4 795h1v2h-1zM2247.4 798h2v2h-2zM2248.2 799h1v3h-1zM2246.8 802h2v2h-2zM2246.9 804h2v2h-2zM2247.0 808h2v1h-2zM2246.8 812h2v3h-2zM2248.2 815h1v3h-1zM2247.2 823h2v2h-2zM2246.6 824h2v1h-2zM2246.8 827h2v3h-2zM2246.1 829h3v2h-3zM2246.3 831h2v2h-2zM2247.5 834h2v2h-2zM2247.8 836h2v3h-2zM2247.2 840h2v1h-2zM2247.4 843h2v3h-2zM2247.0 845h2v1h-2zM2246.1 848h3v2h-3zM2246.6 850h3v1h-3zM2246.2 856h3v2h-3zM2247.5 857h2v2h-2zM2246.3 860h2v3h-2zM2246.8 872h2v1h-2zM2247.4 876h2v2h-2zM2246.1 878h3v2h-3zM2246.9 884h3v1h-3zM2247.4 885h2v1h-2zM2247.7 887h2v1h-2zM2246.6 890h3v2h-3zM2247.7 893h2v1h-2zM2246.4 897h3v3h-3zM2247.3 900h2v1h-2zM2247.7 902h2v1h-2zM2247.5 906h1v3h-1zM2246.3 910h3v1h-3zM2246.9 914h3v1h-3zM2246.3 920h1v2h-1zM2246.2 924h3v2h-3zM2247.2 928h2v1h-2zM2246.9 932h1v2h-1zM2247.1 935h1v1h-1zM2247.8 937h2v2h-2zM2246.8 943h3v3h-3zM2246.1 946h3v1h-3zM2246.6 954h3v1h-3zM2247.4 959h2v2h-2zM2247.0 961h2v1h-2zM2247.2 966h2v1h-2zM2247.4 970h2v1h-2zM2246.6 972h3v2h-3zM2246.6 974h2v3h-2zM2246.6 977h1v2h-1zM2247.8 982h1v1h-1zM2246.3 984h1v1h-1zM2246.5 989h3v1h-3zM2248.7 990h1v2h-1zM2246.7 991h3v3h-3zM2246.8 993h1v3h-1zM2246.9 1004h2v2h-2zM2246.5 1006h2v3h-2zM2246.0 1007h2v2h-2zM2247.9 1008h2v2h-2zM2247.4 1010h2v2h-2zM2246.4 1016h2v1h-2zM2246.3 1018h3v3h-3zM2246.5 1022h1v1h-1zM2247.2 1025h2v2h-2zM2247.0 1028h3v2h-3zM2246.8 1032h2v3h-2zM2246.9 1033h2v1h-2zM2246.0 1036h2v2h-2zM2247.2 1043h2v3h-2zM2247.0 1045h3v3h-3zM2247.4 1048h2v2h-2zM2246.4 1052h3v1h-3zM2246.5 1054h1v1h-1zM2247.1 1056h2v1h-2zM2246.0 1059h3v3h-3zM2246.2 1065h2v3h-2zM2246.9 1069h1v1h-1zM2246.7 1070h1v1h-1zM2247.3 1073h1v3h-1zM2246.3 1075h2v1h-2zM2246.1 1078h2v1h-2zM2246.1 1081h3v2h-3zM2247.9 1084h2v2h-2zM2247.2 1088h2v1h-2zM2246.4 1091h3v2h-3zM2248.4 1092h1v1h-1zM2246.6 1096h3v1h-3zM2246.2 1098h3v2h-3zM2247.8 1099h1v2h-1zM2248.0 1103h2v2h-2zM2246.6 1105h2v1h-2zM2246.9 1109h2v2h-2zM2247.5 1114h2v1h-2zM2248.0 1115h1v2h-1zM2246.4 1118h1v1h-1zM2246.7 1121h3v2h-3zM2246.3 1123h3v3h-3zM2247.2 1125h1v2h-1zM2246.6 1127h1v1h-1zM2246.3 1130h3v1h-3zM2246.3 1135h3v1h-3zM2246.5 1136h1v3h-1zM2246.7 1138h2v2h-2zM2246.7 1144h3v2h-3zM2247.4 1146h2v1h-2zM2247.0 1152h3v2h-3zM2246.1 1158h3v3h-3zM2246.5 1162h2v1h-2zM2247.0 1164h2v2h-2zM2246.5 1168h3v2h-3zM2246.7 1170h2v2h-2zM2246.9 1174h2v1h-2zM2246.7 1181h1v1h-1zM2246.8 1184h2v1h-2zM2247.1 1188h2v2h-2zM2246.9 1193h2v2h-2zM2246.6 1199h1v1h-1zM2248.2 1205h1v1h-1zM2246.3 1207h3v2h-3zM2246.7 1211h3v2h-3zM2248.0 1216h2v2h-2zM2246.3 1220h2v2h-2zM2246.8 1229h3v2h-3zM2246.8 1233h2v1h-2zM2246.1 1237h2v2h-2zM2246.6 1241h3v2h-3zM2246.4 1243h3v3h-3zM2247.9 1244h1v2h-1zM2247.3 1246h2v2h-2zM2246.6 1251h3v2h-3zM2246.5 1254h2v1h-2zM2248.0 1257h2v2h-2zM2246.9 1260h2v2h-2zM2246.5 1263h3v1h-3zM2246.5 1267h1v2h-1zM2248.3 1270h1v2h-1zM2247.3 1273h1v3h-1zM2246.9 1276h3v1h-3zM2247.3 1278h2v3h-2zM2246.4 1282h3v3h-3zM2246.3 1285h3v2h-3zM2246.5 1287h3v3h-3zM2246.0 1290h2v1h-2zM2246.3 1296h3v2h-3zM2246.8 1298h1v2h-1zM2247.1 1301h2v1h-2zM2246.9 1305h3v2h-3zM2246.3 1307h1v2h-1zM2246.1 1311h2v2h-2zM2246.9 1312h2v2h-2zM2246.1 1315h3v1h-3zM2246.6 1318h2v1h-2zM2247.9 1325h2v1h-2zM2246.0 1331h1v1h-1zM2248.5 1335h1v3h-1zM2248.6 1337h1v3h-1zM2246.7 1339h3v2h-3zM2246.1 1343h2v2h-2zM2247.9 1349h2v2h-2zM2246.6 1351h3v2h-3zM2248.0 1358h1v3h-1zM2248.0 1360h2v2h-2zM2246.7 1365h1v1h-1zM2246.6 1367h2v2h-2zM2246.1 1370h3v1h-3zM2247.0 1375h2v2h-2zM2248.5 1376h1v1h-1z"/></svg>
</body></html>
